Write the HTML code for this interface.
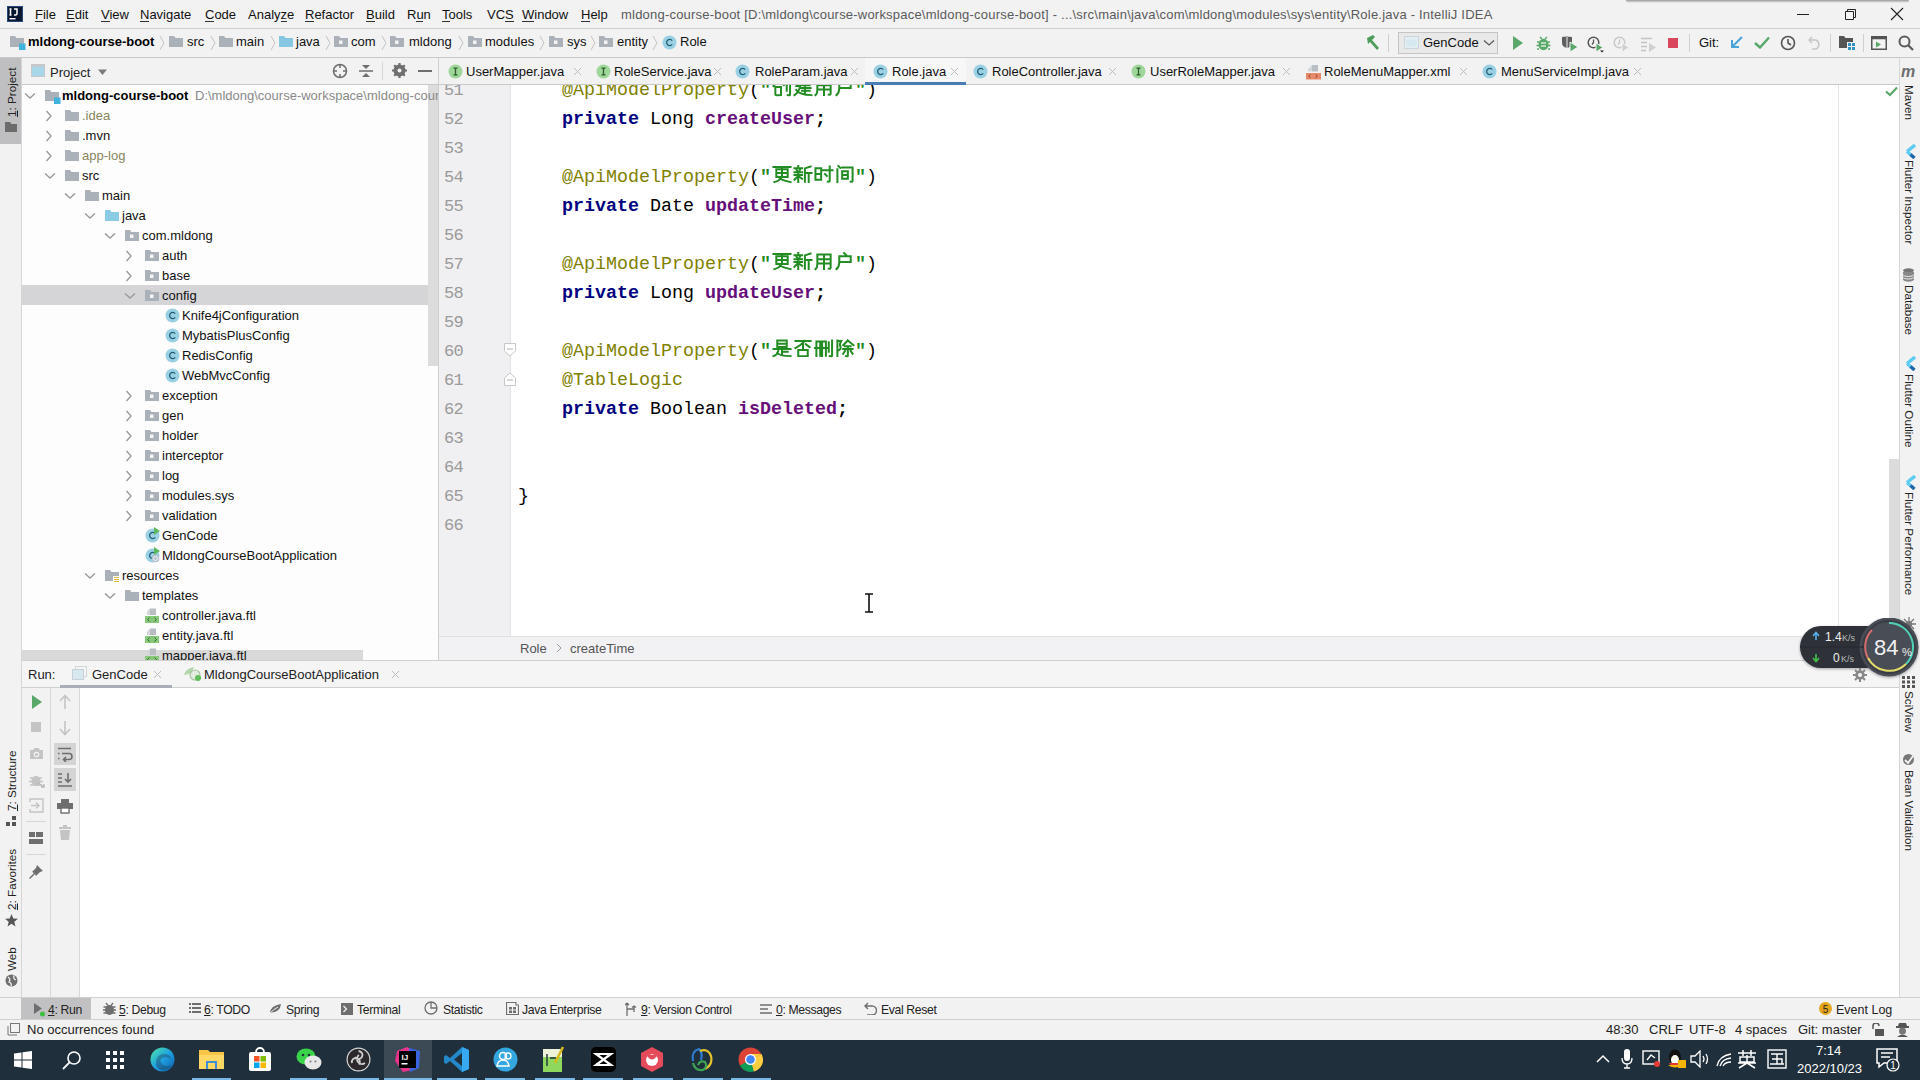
<!DOCTYPE html><html><head><meta charset="utf-8"><style>
html,body{margin:0;padding:0;width:1920px;height:1080px;overflow:hidden;background:#f2f2f2;font-family:"Liberation Sans", sans-serif;}
body>div,body>svg{position:absolute;}
.t{position:absolute;white-space:nowrap;}
div>div,div>svg{position:absolute;}
</style></head><body>

<div style="left:0px;top:0px;width:1920px;height:28px;background:#f2f2f2;"></div>
<div style="left:0px;top:28px;width:1920px;height:1px;background:#cfcfcf;"></div>
<div style="left:0px;top:29px;width:1920px;height:28px;background:#f2f2f2;"></div>
<div style="left:0px;top:57px;width:1920px;height:1px;background:#c9c9c9;"></div>
<div style="left:0px;top:58px;width:21px;height:940px;background:#f2f2f2;"></div>
<div style="left:21px;top:58px;width:1px;height:940px;background:#d6d6d6;"></div>
<div style="left:0px;top:58px;width:21px;height:86px;background:#bfbfc1;"></div>
<div style="left:22px;top:58px;width:416px;height:27px;background:#f2f2f2;"></div>
<div style="left:22px;top:84px;width:416px;height:1px;background:#c9c9c9;"></div>
<div style="left:22px;top:85px;width:416px;height:575px;background:#fdfdfd;"></div>
<div style="left:438px;top:58px;width:1px;height:602px;background:#cfcfcf;"></div>
<div style="left:439px;top:58px;width:1460px;height:26px;background:#f2f2f2;"></div>
<div style="left:439px;top:84px;width:1460px;height:1px;background:#c9c9c9;"></div>
<div style="left:439px;top:85px;width:71px;height:551px;background:#f0eff1;"></div>
<div style="left:510px;top:85px;width:1px;height:551px;background:#e3e3e3;"></div>
<div style="left:511px;top:85px;width:1388px;height:551px;background:#ffffff;"></div>
<div style="left:1838px;top:85px;width:1px;height:551px;background:#e4e4e4;"></div>
<div style="left:439px;top:636px;width:1460px;height:1px;background:#e0e0e0;"></div>
<div style="left:439px;top:637px;width:1460px;height:23px;background:#f2f1f3;"></div>
<div style="left:22px;top:660px;width:1877px;height:1px;background:#cfcfcf;"></div>
<div style="left:1899px;top:58px;width:21px;height:940px;background:#f2f2f2;"></div>
<div style="left:1899px;top:58px;width:1px;height:940px;background:#d6d6d6;"></div>
<div style="left:22px;top:661px;width:1877px;height:26px;background:#f5f5f6;"></div>
<div style="left:22px;top:687px;width:1877px;height:1px;background:#d0d0d0;"></div>
<div style="left:22px;top:688px;width:28px;height:309px;background:#f2f2f2;"></div>
<div style="left:50px;top:688px;width:1px;height:309px;background:#d8d8d8;"></div>
<div style="left:51px;top:688px;width:28px;height:309px;background:#f2f2f2;"></div>
<div style="left:79px;top:688px;width:1px;height:309px;background:#d8d8d8;"></div>
<div style="left:80px;top:688px;width:1819px;height:309px;background:#ffffff;"></div>
<div style="left:0px;top:997px;width:1920px;height:1px;background:#d0d0d0;"></div>
<div style="left:0px;top:998px;width:1920px;height:21px;background:#f2f2f2;"></div>
<div style="left:21px;top:998px;width:70px;height:21px;background:#c1c1c3;"></div>
<div style="left:0px;top:1019px;width:1920px;height:1px;background:#cfcfcf;"></div>
<div style="left:0px;top:1020px;width:1920px;height:20px;background:#f2f2f2;"></div>
<div style="left:0px;top:1040px;width:1920px;height:40px;background:#1f2f3b;"></div>
<svg style="left:7px;top:6px;" width="16" height="16" viewBox="0 0 16 16"><rect width="16" height="16" fill="#0a1730"/><rect x="0.5" y="0.5" width="15" height="15" fill="none" stroke="#24497a" stroke-width="1"/><path d="M3.5 3 V9 M2.5 3 H4.5 M2.5 9 H4.5 M7 3 H10 V7.5 Q10 9 8.3 9 H7" fill="none" stroke="#fff" stroke-width="1.5"/><rect x="2.5" y="12" width="6" height="1.4" fill="#fff"/></svg>
<div class="t" style="left:35px;top:7px;font-size:13px;line-height:normal;color:#111;font-weight:normal;font-family:'Liberation Sans', sans-serif;">File</div>
<div style="left:35px;top:21px;width:8px;height:1px;background:#333;"></div>
<div class="t" style="left:66px;top:7px;font-size:13px;line-height:normal;color:#111;font-weight:normal;font-family:'Liberation Sans', sans-serif;">Edit</div>
<div style="left:66px;top:21px;width:9px;height:1px;background:#333;"></div>
<div class="t" style="left:101px;top:7px;font-size:13px;line-height:normal;color:#111;font-weight:normal;font-family:'Liberation Sans', sans-serif;">View</div>
<div style="left:101px;top:21px;width:9px;height:1px;background:#333;"></div>
<div class="t" style="left:140px;top:7px;font-size:13px;line-height:normal;color:#111;font-weight:normal;font-family:'Liberation Sans', sans-serif;">Navigate</div>
<div style="left:140px;top:21px;width:9px;height:1px;background:#333;"></div>
<div class="t" style="left:205px;top:7px;font-size:13px;line-height:normal;color:#111;font-weight:normal;font-family:'Liberation Sans', sans-serif;">Code</div>
<div style="left:205px;top:21px;width:9px;height:1px;background:#333;"></div>
<div class="t" style="left:248px;top:7px;font-size:13px;line-height:normal;color:#111;font-weight:normal;font-family:'Liberation Sans', sans-serif;">Analyze</div>
<div style="left:281px;top:21px;width:6px;height:1px;background:#333;"></div>
<div class="t" style="left:305px;top:7px;font-size:13px;line-height:normal;color:#111;font-weight:normal;font-family:'Liberation Sans', sans-serif;">Refactor</div>
<div style="left:305px;top:21px;width:9px;height:1px;background:#333;"></div>
<div class="t" style="left:366px;top:7px;font-size:13px;line-height:normal;color:#111;font-weight:normal;font-family:'Liberation Sans', sans-serif;">Build</div>
<div style="left:366px;top:21px;width:9px;height:1px;background:#333;"></div>
<div class="t" style="left:407px;top:7px;font-size:13px;line-height:normal;color:#111;font-weight:normal;font-family:'Liberation Sans', sans-serif;">Run</div>
<div style="left:416px;top:21px;width:7px;height:1px;background:#333;"></div>
<div class="t" style="left:442px;top:7px;font-size:13px;line-height:normal;color:#111;font-weight:normal;font-family:'Liberation Sans', sans-serif;">Tools</div>
<div style="left:442px;top:21px;width:8px;height:1px;background:#333;"></div>
<div class="t" style="left:487px;top:7px;font-size:13px;line-height:normal;color:#111;font-weight:normal;font-family:'Liberation Sans', sans-serif;">VCS</div>
<div style="left:505px;top:21px;width:9px;height:1px;background:#333;"></div>
<div class="t" style="left:522px;top:7px;font-size:13px;line-height:normal;color:#111;font-weight:normal;font-family:'Liberation Sans', sans-serif;">Window</div>
<div style="left:522px;top:21px;width:12px;height:1px;background:#333;"></div>
<div class="t" style="left:581px;top:7px;font-size:13px;line-height:normal;color:#111;font-weight:normal;font-family:'Liberation Sans', sans-serif;">Help</div>
<div style="left:581px;top:21px;width:9px;height:1px;background:#333;"></div>
<div class="t" style="left:621px;top:7px;font-size:13px;line-height:normal;color:#5a5a5a;font-weight:normal;font-family:'Liberation Sans', sans-serif;letter-spacing:0.21px;">mldong-course-boot [D:\mldong\course-workspace\mldong-course-boot] - ...\src\main\java\com\mldong\modules\sys\entity\Role.java - IntelliJ IDEA</div>
<svg style="left:1795px;top:8px;" width="16" height="12" viewBox="0 0 16 12"><path d="M2 6.5 H14" stroke="#222" stroke-width="1"/></svg>
<svg style="left:1842px;top:7px;" width="16" height="14" viewBox="0 0 16 14"><path d="M3.5 4.5 H11.5 V12.5 H3.5 Z M5.5 4.5 V2.5 H13.5 V10.5 H11.5" fill="none" stroke="#222" stroke-width="1"/></svg>
<svg style="left:1889px;top:7px;" width="16" height="16" viewBox="0 0 16 16"><path d="M2 1 L14 13 M14 1 L2 13" stroke="#222" stroke-width="1.1"/></svg>
<svg style="left:10px;top:36px;" width="16" height="15" viewBox="0 0 16 15"><path d="M0 0 H5 L6.5 2 H14 V11 H0 Z" fill="#abb1b8"/><rect x="9" y="7.5" width="6.5" height="6.5" fill="#3fb3dc"/></svg>
<div class="t" style="left:28px;top:34px;font-size:13px;line-height:normal;color:#000;font-weight:bold;font-family:'Liberation Sans', sans-serif;">mldong-course-boot</div>
<svg style="left:159px;top:35px;" width="6" height="16" viewBox="0 0 6 16"><path d="M1 1 L5 8 L1 15" fill="none" stroke="#c3c3c3" stroke-width="1"/></svg>
<svg style="left:169px;top:36px;" width="16" height="13" viewBox="0 0 16 13"><path d="M0 0 H5 L6.5 2 H14 V11 H0 Z" fill="#abb1b8"/></svg>
<div class="t" style="left:187px;top:34px;font-size:13px;line-height:normal;color:#111;font-weight:normal;font-family:'Liberation Sans', sans-serif;">src</div>
<svg style="left:219px;top:36px;" width="16" height="13" viewBox="0 0 16 13"><path d="M0 0 H5 L6.5 2 H14 V11 H0 Z" fill="#abb1b8"/></svg>
<div class="t" style="left:236px;top:34px;font-size:13px;line-height:normal;color:#111;font-weight:normal;font-family:'Liberation Sans', sans-serif;">main</div>
<svg style="left:279px;top:36px;" width="16" height="13" viewBox="0 0 16 13"><path d="M0 0 H5 L6.5 2 H14 V11 H0 Z" fill="#86c7e3"/></svg>
<div class="t" style="left:296px;top:34px;font-size:13px;line-height:normal;color:#111;font-weight:normal;font-family:'Liberation Sans', sans-serif;">java</div>
<svg style="left:334px;top:36px;" width="16" height="13" viewBox="0 0 16 13"><path d="M0 0 H5 L6.5 2 H14 V11 H0 Z" fill="#abb1b8"/><rect x="5" y="4.5" width="3.5" height="3.5" fill="#f4f4f4"/></svg>
<div class="t" style="left:351px;top:34px;font-size:13px;line-height:normal;color:#111;font-weight:normal;font-family:'Liberation Sans', sans-serif;">com</div>
<svg style="left:390px;top:36px;" width="16" height="13" viewBox="0 0 16 13"><path d="M0 0 H5 L6.5 2 H14 V11 H0 Z" fill="#abb1b8"/><rect x="5" y="4.5" width="3.5" height="3.5" fill="#f4f4f4"/></svg>
<div class="t" style="left:409px;top:34px;font-size:13px;line-height:normal;color:#111;font-weight:normal;font-family:'Liberation Sans', sans-serif;">mldong</div>
<svg style="left:468px;top:36px;" width="16" height="13" viewBox="0 0 16 13"><path d="M0 0 H5 L6.5 2 H14 V11 H0 Z" fill="#abb1b8"/><rect x="5" y="4.5" width="3.5" height="3.5" fill="#f4f4f4"/></svg>
<div class="t" style="left:485px;top:34px;font-size:13px;line-height:normal;color:#111;font-weight:normal;font-family:'Liberation Sans', sans-serif;">modules</div>
<svg style="left:549px;top:36px;" width="16" height="13" viewBox="0 0 16 13"><path d="M0 0 H5 L6.5 2 H14 V11 H0 Z" fill="#abb1b8"/><rect x="5" y="4.5" width="3.5" height="3.5" fill="#f4f4f4"/></svg>
<div class="t" style="left:567px;top:34px;font-size:13px;line-height:normal;color:#111;font-weight:normal;font-family:'Liberation Sans', sans-serif;">sys</div>
<svg style="left:599px;top:36px;" width="16" height="13" viewBox="0 0 16 13"><path d="M0 0 H5 L6.5 2 H14 V11 H0 Z" fill="#abb1b8"/><rect x="5" y="4.5" width="3.5" height="3.5" fill="#f4f4f4"/></svg>
<div class="t" style="left:617px;top:34px;font-size:13px;line-height:normal;color:#111;font-weight:normal;font-family:'Liberation Sans', sans-serif;">entity</div>
<svg style="left:210px;top:35px;" width="6" height="16" viewBox="0 0 6 16"><path d="M1 1 L5 8 L1 15" fill="none" stroke="#c3c3c3" stroke-width="1"/></svg>
<svg style="left:270px;top:35px;" width="6" height="16" viewBox="0 0 6 16"><path d="M1 1 L5 8 L1 15" fill="none" stroke="#c3c3c3" stroke-width="1"/></svg>
<svg style="left:325px;top:35px;" width="6" height="16" viewBox="0 0 6 16"><path d="M1 1 L5 8 L1 15" fill="none" stroke="#c3c3c3" stroke-width="1"/></svg>
<svg style="left:381px;top:35px;" width="6" height="16" viewBox="0 0 6 16"><path d="M1 1 L5 8 L1 15" fill="none" stroke="#c3c3c3" stroke-width="1"/></svg>
<svg style="left:458px;top:35px;" width="6" height="16" viewBox="0 0 6 16"><path d="M1 1 L5 8 L1 15" fill="none" stroke="#c3c3c3" stroke-width="1"/></svg>
<svg style="left:539px;top:35px;" width="6" height="16" viewBox="0 0 6 16"><path d="M1 1 L5 8 L1 15" fill="none" stroke="#c3c3c3" stroke-width="1"/></svg>
<svg style="left:590px;top:35px;" width="6" height="16" viewBox="0 0 6 16"><path d="M1 1 L5 8 L1 15" fill="none" stroke="#c3c3c3" stroke-width="1"/></svg>
<svg style="left:652px;top:35px;" width="6" height="16" viewBox="0 0 6 16"><path d="M1 1 L5 8 L1 15" fill="none" stroke="#c3c3c3" stroke-width="1"/></svg>
<svg style="left:662px;top:35px;" width="15" height="15" viewBox="0 0 15 15"><circle cx="7.5" cy="7.5" r="7" fill="#9ad0e4"/><path d="M10.2 5.6 A3.1 3.1 0 1 0 10.2 9.4" fill="none" stroke="#245f78" stroke-width="1.3"/></svg>
<div class="t" style="left:680px;top:34px;font-size:13px;line-height:normal;color:#111;font-weight:normal;font-family:'Liberation Sans', sans-serif;">Role</div>
<svg style="left:1364px;top:34px;" width="18" height="18" viewBox="0 0 18 18"><path d="M3 4 L9 1 L11 3 L8 6 L15 14 L13 16 L6 8 L4 10 Z" fill="#4d9e5c"/></svg>
<div style="left:1388px;top:34px;width:1px;height:18px;background:#cfcfcf;"></div>
<div style="left:1398px;top:32px;width:100px;height:22px;background:#e9e9e9;border:1px solid #c4c4c4;box-sizing:border-box;"></div>
<svg style="left:1404px;top:36px;" width="16" height="14" viewBox="0 0 16 14"><rect x="0.5" y="0.5" width="14" height="12" fill="#e3eef3" stroke="#c9d6dc"/><rect x="2.5" y="3.5" width="10" height="7" fill="#d5e7ef"/></svg>
<div class="t" style="left:1423px;top:35px;font-size:13px;line-height:normal;color:#111;font-weight:normal;font-family:'Liberation Sans', sans-serif;">GenCode</div>
<svg style="left:1483px;top:39px;" width="12" height="8" viewBox="0 0 12 8"><path d="M1 1.5 L6 6 L11 1.5" fill="none" stroke="#555" stroke-width="1.2"/></svg>
<svg style="left:1512px;top:36px;" width="12" height="14" viewBox="0 0 12 14"><path d="M1 0 L11 7 L1 14 Z" fill="#59a869"/></svg>
<svg style="left:1536px;top:35px;" width="15" height="16" viewBox="0 0 15 16"><path d="M4 2 L6 4 M11 2 L9 4" stroke="#59a869" stroke-width="1.5"/><ellipse cx="7.5" cy="9.5" rx="5" ry="5.8" fill="#59a869"/><path d="M1 7 H3 M12 7 H14 M0.5 10.5 H3 M12 10.5 H14.5 M1 14 H3 M12 14 H14" stroke="#59a869" stroke-width="1.5"/><path d="M5 8 H10 M5 11 H10" stroke="#d8ecd9" stroke-width="1.3"/></svg>
<svg style="left:1561px;top:36px;" width="18" height="17" viewBox="0 0 18 17"><path d="M1 1 Q5 0 11 1 V7 Q11 11 6 12 Q1 11 1 7 Z" fill="#5f5f5f"/><path d="M6 1 V12" stroke="#f2f2f2" stroke-width="1"/><path d="M9 6 L17 11 L9 16 Z" fill="#59a869" stroke="#f2f2f2" stroke-width="1"/></svg>
<svg style="left:1587px;top:36px;" width="19" height="17" viewBox="0 0 19 17"><circle cx="6.5" cy="6.5" r="5.3" fill="none" stroke="#555" stroke-width="1.5"/><path d="M6.5 3.5 V6.5 L5 8.5" stroke="#555" stroke-width="1.3" fill="none"/><path d="M9 7 L16 11.5 L9 16 Z" fill="#59a869" stroke="#f2f2f2" stroke-width="1"/><path d="M13 14.5 H17 L15 16.5 Z" fill="#222"/></svg>
<svg style="left:1613px;top:36px;" width="19" height="17" viewBox="0 0 19 17"><circle cx="6.5" cy="6.5" r="5.3" fill="none" stroke="#c8c8c8" stroke-width="1.5"/><path d="M6.5 3.5 V6.5 L5 8.5" stroke="#c8c8c8" stroke-width="1.3" fill="none"/><path d="M9 7 L16 11.5 L9 16 Z" fill="#cfcfcf" stroke="#f2f2f2" stroke-width="1"/></svg>
<svg style="left:1640px;top:37px;" width="17" height="15" viewBox="0 0 17 15"><path d="M1 1.5 H12 M1 5.5 H7 M1 9.5 H7 M1 13.5 H6" stroke="#c4c4c4" stroke-width="1.5"/><path d="M9 6 L16 10.5 L9 15 Z" fill="#cfcfcf"/></svg>
<div style="left:1668px;top:38px;width:10px;height:10px;background:#d9455b;"></div>
<div style="left:1689px;top:34px;width:1px;height:18px;background:#cfcfcf;"></div>
<div class="t" style="left:1699px;top:35px;font-size:13px;line-height:normal;color:#111;font-weight:normal;font-family:'Liberation Sans', sans-serif;">Git:</div>
<svg style="left:1729px;top:35px;" width="15" height="15" viewBox="0 0 15 15"><path d="M13 2 L3 12 M3 5 V12 H10" fill="none" stroke="#4aa3d6" stroke-width="2"/></svg>
<svg style="left:1754px;top:36px;" width="16" height="13" viewBox="0 0 16 13"><path d="M1 7 L6 11.5 L15 1.5" fill="none" stroke="#59a869" stroke-width="2.4"/></svg>
<svg style="left:1780px;top:35px;" width="16" height="16" viewBox="0 0 16 16"><circle cx="8" cy="8" r="6.5" fill="none" stroke="#555" stroke-width="1.6"/><path d="M8 4 V8 L11 10" stroke="#555" stroke-width="1.6" fill="none"/></svg>
<svg style="left:1808px;top:36px;" width="14" height="14" viewBox="0 0 14 14"><path d="M4 1 L1 4 L4 7 M1 4 H8 A5 5 0 0 1 8 13 H4" fill="none" stroke="#c6c6c6" stroke-width="1.5"/></svg>
<div style="left:1830px;top:34px;width:1px;height:18px;background:#cfcfcf;"></div>
<svg style="left:1839px;top:36px;" width="17" height="14" viewBox="0 0 17 14"><path d="M0 0 H5 L6.5 2 H14 V12 H0 Z" fill="#555"/><rect x="8" y="6" width="8" height="8" fill="#f2f2f2"/><rect x="9" y="7" width="3" height="3" fill="#3592c4"/><rect x="13" y="7" width="3" height="3" fill="#3592c4"/><rect x="9" y="11" width="3" height="3" fill="#3592c4"/><rect x="13" y="11" width="3" height="3" fill="#3592c4"/></svg>
<div style="left:1863px;top:34px;width:1px;height:18px;background:#cfcfcf;"></div>
<svg style="left:1871px;top:36px;" width="16" height="14" viewBox="0 0 16 14"><rect x="0.75" y="0.75" width="14.5" height="12.5" fill="none" stroke="#555" stroke-width="1.5"/><rect x="0.75" y="0.75" width="14.5" height="2.5" fill="#555"/><path d="M5 5.5 L10 8.5 L5 11.5 Z" fill="#59a869"/></svg>
<svg style="left:1898px;top:35px;" width="16" height="16" viewBox="0 0 16 16"><circle cx="6.5" cy="6.5" r="5" fill="none" stroke="#5a5a5a" stroke-width="2"/><path d="M10 10 L15 15" stroke="#5a5a5a" stroke-width="2.2"/></svg>
<svg style="left:31px;top:64px;" width="15" height="14" viewBox="0 0 15 14"><rect x="0.5" y="0.5" width="13" height="12" fill="#a9d7ea" stroke="#c4c8cc"/><rect x="0.5" y="0.5" width="13" height="2.5" fill="#c4c8cc"/></svg>
<div class="t" style="left:50px;top:65px;font-size:13px;line-height:normal;color:#222;font-weight:normal;font-family:'Liberation Sans', sans-serif;">Project</div>
<svg style="left:98px;top:69px;" width="10" height="7" viewBox="0 0 10 7"><path d="M0 0.5 H9 L4.5 6 Z" fill="#7a7a7a"/></svg>
<svg style="left:332px;top:63px;" width="16" height="16" viewBox="0 0 16 16"><circle cx="8" cy="8" r="6.5" fill="none" stroke="#6e6e6e" stroke-width="1.5"/><path d="M8 1 V5 M8 11 V15 M1 8 H5 M11 8 H15" stroke="#6e6e6e" stroke-width="1.5"/></svg>
<svg style="left:359px;top:64px;" width="14" height="14" viewBox="0 0 14 14"><path d="M0 7 H14" stroke="#6e6e6e" stroke-width="1.5"/><path d="M3 1 H11 L7 5 Z M3 13 H11 L7 9 Z" fill="#6e6e6e"/></svg>
<div style="left:382px;top:62px;width:1px;height:18px;background:#d6d6d6;"></div>
<svg style="left:392px;top:63px;" width="15" height="15" viewBox="0 0 15 15"><circle cx="7.5" cy="7.5" r="4.5" fill="none" stroke="#6e6e6e" stroke-width="3"/><path d="M7.5 0 V15 M0 7.5 H15 M2.2 2.2 L12.8 12.8 M12.8 2.2 L2.2 12.8" stroke="#6e6e6e" stroke-width="2.2"/><circle cx="7.5" cy="7.5" r="2" fill="#f2f2f2"/></svg>
<div style="left:418px;top:70px;width:14px;height:2px;background:#6e6e6e;"></div>
<div style="left:0;top:0;width:1920px;height:1080px;clip-path:inset(85px 1482px 420px 22px);">
<div style="left:22px;top:285px;width:406px;height:20px;background:#d5d5d7;"></div>
<div style="left:428px;top:85px;width:10px;height:281px;background:#dcdcdc;"></div>
<div style="left:22px;top:650px;width:341px;height:10px;background:#d9d9d9;"></div>
<svg style="left:24px;top:92px;" width="12" height="8" viewBox="0 0 12 8"><path d="M1 1.5 L6 6 L11 1.5" fill="none" stroke="#9a9a9a" stroke-width="1.4"/></svg>
<svg style="left:45px;top:90px;" width="16" height="15" viewBox="0 0 16 15"><path d="M0 0 H5 L6.5 2 H14 V11 H0 Z" fill="#abb1b8"/><rect x="9" y="7.5" width="6.5" height="6.5" fill="#3fb3dc"/></svg>
<div class="t" style="left:62px;top:88px;font-size:13px;line-height:normal;color:#000;font-weight:bold;font-family:'Liberation Sans', sans-serif;">mldong-course-boot</div>
<div class="t" style="left:195px;top:88px;font-size:13px;line-height:normal;color:#8a8a8a;font-weight:normal;font-family:'Liberation Sans', sans-serif;">D:\mldong\course-workspace\mldong-course-boot</div>
<svg style="left:45px;top:110px;" width="8" height="12" viewBox="0 0 8 12"><path d="M1.5 1 L6 6 L1.5 11" fill="none" stroke="#9a9a9a" stroke-width="1.4"/></svg>
<svg style="left:65px;top:110px;" width="16" height="13" viewBox="0 0 16 13"><path d="M0 0 H5 L6.5 2 H14 V11 H0 Z" fill="#abb1b8"/></svg>
<div class="t" style="left:82px;top:108px;font-size:13px;line-height:normal;color:#87865a;font-weight:normal;font-family:'Liberation Sans', sans-serif;">.idea</div>
<svg style="left:45px;top:130px;" width="8" height="12" viewBox="0 0 8 12"><path d="M1.5 1 L6 6 L1.5 11" fill="none" stroke="#9a9a9a" stroke-width="1.4"/></svg>
<svg style="left:65px;top:130px;" width="16" height="13" viewBox="0 0 16 13"><path d="M0 0 H5 L6.5 2 H14 V11 H0 Z" fill="#abb1b8"/></svg>
<div class="t" style="left:82px;top:128px;font-size:13px;line-height:normal;color:#111;font-weight:normal;font-family:'Liberation Sans', sans-serif;">.mvn</div>
<svg style="left:45px;top:150px;" width="8" height="12" viewBox="0 0 8 12"><path d="M1.5 1 L6 6 L1.5 11" fill="none" stroke="#9a9a9a" stroke-width="1.4"/></svg>
<svg style="left:65px;top:150px;" width="16" height="13" viewBox="0 0 16 13"><path d="M0 0 H5 L6.5 2 H14 V11 H0 Z" fill="#abb1b8"/></svg>
<div class="t" style="left:82px;top:148px;font-size:13px;line-height:normal;color:#87865a;font-weight:normal;font-family:'Liberation Sans', sans-serif;">app-log</div>
<svg style="left:44px;top:172px;" width="12" height="8" viewBox="0 0 12 8"><path d="M1 1.5 L6 6 L11 1.5" fill="none" stroke="#9a9a9a" stroke-width="1.4"/></svg>
<svg style="left:65px;top:170px;" width="16" height="13" viewBox="0 0 16 13"><path d="M0 0 H5 L6.5 2 H14 V11 H0 Z" fill="#abb1b8"/></svg>
<div class="t" style="left:82px;top:168px;font-size:13px;line-height:normal;color:#111;font-weight:normal;font-family:'Liberation Sans', sans-serif;">src</div>
<svg style="left:64px;top:192px;" width="12" height="8" viewBox="0 0 12 8"><path d="M1 1.5 L6 6 L11 1.5" fill="none" stroke="#9a9a9a" stroke-width="1.4"/></svg>
<svg style="left:85px;top:190px;" width="16" height="13" viewBox="0 0 16 13"><path d="M0 0 H5 L6.5 2 H14 V11 H0 Z" fill="#abb1b8"/></svg>
<div class="t" style="left:102px;top:188px;font-size:13px;line-height:normal;color:#111;font-weight:normal;font-family:'Liberation Sans', sans-serif;">main</div>
<svg style="left:84px;top:212px;" width="12" height="8" viewBox="0 0 12 8"><path d="M1 1.5 L6 6 L11 1.5" fill="none" stroke="#9a9a9a" stroke-width="1.4"/></svg>
<svg style="left:105px;top:210px;" width="16" height="13" viewBox="0 0 16 13"><path d="M0 0 H5 L6.5 2 H14 V11 H0 Z" fill="#8ccbe6"/></svg>
<div class="t" style="left:122px;top:208px;font-size:13px;line-height:normal;color:#111;font-weight:normal;font-family:'Liberation Sans', sans-serif;">java</div>
<svg style="left:104px;top:232px;" width="12" height="8" viewBox="0 0 12 8"><path d="M1 1.5 L6 6 L11 1.5" fill="none" stroke="#9a9a9a" stroke-width="1.4"/></svg>
<svg style="left:125px;top:230px;" width="16" height="13" viewBox="0 0 16 13"><path d="M0 0 H5 L6.5 2 H14 V11 H0 Z" fill="#abb1b8"/><rect x="5" y="4.5" width="3.5" height="3.5" fill="#f4f4f4"/></svg>
<div class="t" style="left:142px;top:228px;font-size:13px;line-height:normal;color:#111;font-weight:normal;font-family:'Liberation Sans', sans-serif;">com.mldong</div>
<svg style="left:125px;top:250px;" width="8" height="12" viewBox="0 0 8 12"><path d="M1.5 1 L6 6 L1.5 11" fill="none" stroke="#9a9a9a" stroke-width="1.4"/></svg>
<svg style="left:145px;top:250px;" width="16" height="13" viewBox="0 0 16 13"><path d="M0 0 H5 L6.5 2 H14 V11 H0 Z" fill="#abb1b8"/><rect x="5" y="4.5" width="3.5" height="3.5" fill="#f4f4f4"/></svg>
<div class="t" style="left:162px;top:248px;font-size:13px;line-height:normal;color:#111;font-weight:normal;font-family:'Liberation Sans', sans-serif;">auth</div>
<svg style="left:125px;top:270px;" width="8" height="12" viewBox="0 0 8 12"><path d="M1.5 1 L6 6 L1.5 11" fill="none" stroke="#9a9a9a" stroke-width="1.4"/></svg>
<svg style="left:145px;top:270px;" width="16" height="13" viewBox="0 0 16 13"><path d="M0 0 H5 L6.5 2 H14 V11 H0 Z" fill="#abb1b8"/><rect x="5" y="4.5" width="3.5" height="3.5" fill="#f4f4f4"/></svg>
<div class="t" style="left:162px;top:268px;font-size:13px;line-height:normal;color:#111;font-weight:normal;font-family:'Liberation Sans', sans-serif;">base</div>
<svg style="left:124px;top:292px;" width="12" height="8" viewBox="0 0 12 8"><path d="M1 1.5 L6 6 L11 1.5" fill="none" stroke="#9a9a9a" stroke-width="1.4"/></svg>
<svg style="left:145px;top:290px;" width="16" height="13" viewBox="0 0 16 13"><path d="M0 0 H5 L6.5 2 H14 V11 H0 Z" fill="#abb1b8"/><rect x="5" y="4.5" width="3.5" height="3.5" fill="#f4f4f4"/></svg>
<div class="t" style="left:162px;top:288px;font-size:13px;line-height:normal;color:#111;font-weight:normal;font-family:'Liberation Sans', sans-serif;">config</div>
<svg style="left:165px;top:308px;" width="15" height="15" viewBox="0 0 15 15"><circle cx="7.5" cy="7.5" r="7" fill="#9ad0e4"/><path d="M10.2 5.6 A3.1 3.1 0 1 0 10.2 9.4" fill="none" stroke="#245f78" stroke-width="1.3"/></svg>
<div class="t" style="left:182px;top:308px;font-size:13px;line-height:normal;color:#111;font-weight:normal;font-family:'Liberation Sans', sans-serif;">Knife4jConfiguration</div>
<svg style="left:165px;top:328px;" width="15" height="15" viewBox="0 0 15 15"><circle cx="7.5" cy="7.5" r="7" fill="#9ad0e4"/><path d="M10.2 5.6 A3.1 3.1 0 1 0 10.2 9.4" fill="none" stroke="#245f78" stroke-width="1.3"/></svg>
<div class="t" style="left:182px;top:328px;font-size:13px;line-height:normal;color:#111;font-weight:normal;font-family:'Liberation Sans', sans-serif;">MybatisPlusConfig</div>
<svg style="left:165px;top:348px;" width="15" height="15" viewBox="0 0 15 15"><circle cx="7.5" cy="7.5" r="7" fill="#9ad0e4"/><path d="M10.2 5.6 A3.1 3.1 0 1 0 10.2 9.4" fill="none" stroke="#245f78" stroke-width="1.3"/></svg>
<div class="t" style="left:182px;top:348px;font-size:13px;line-height:normal;color:#111;font-weight:normal;font-family:'Liberation Sans', sans-serif;">RedisConfig</div>
<svg style="left:165px;top:368px;" width="15" height="15" viewBox="0 0 15 15"><circle cx="7.5" cy="7.5" r="7" fill="#9ad0e4"/><path d="M10.2 5.6 A3.1 3.1 0 1 0 10.2 9.4" fill="none" stroke="#245f78" stroke-width="1.3"/></svg>
<div class="t" style="left:182px;top:368px;font-size:13px;line-height:normal;color:#111;font-weight:normal;font-family:'Liberation Sans', sans-serif;">WebMvcConfig</div>
<svg style="left:125px;top:390px;" width="8" height="12" viewBox="0 0 8 12"><path d="M1.5 1 L6 6 L1.5 11" fill="none" stroke="#9a9a9a" stroke-width="1.4"/></svg>
<svg style="left:145px;top:390px;" width="16" height="13" viewBox="0 0 16 13"><path d="M0 0 H5 L6.5 2 H14 V11 H0 Z" fill="#abb1b8"/><rect x="5" y="4.5" width="3.5" height="3.5" fill="#f4f4f4"/></svg>
<div class="t" style="left:162px;top:388px;font-size:13px;line-height:normal;color:#111;font-weight:normal;font-family:'Liberation Sans', sans-serif;">exception</div>
<svg style="left:125px;top:410px;" width="8" height="12" viewBox="0 0 8 12"><path d="M1.5 1 L6 6 L1.5 11" fill="none" stroke="#9a9a9a" stroke-width="1.4"/></svg>
<svg style="left:145px;top:410px;" width="16" height="13" viewBox="0 0 16 13"><path d="M0 0 H5 L6.5 2 H14 V11 H0 Z" fill="#abb1b8"/><rect x="5" y="4.5" width="3.5" height="3.5" fill="#f4f4f4"/></svg>
<div class="t" style="left:162px;top:408px;font-size:13px;line-height:normal;color:#111;font-weight:normal;font-family:'Liberation Sans', sans-serif;">gen</div>
<svg style="left:125px;top:430px;" width="8" height="12" viewBox="0 0 8 12"><path d="M1.5 1 L6 6 L1.5 11" fill="none" stroke="#9a9a9a" stroke-width="1.4"/></svg>
<svg style="left:145px;top:430px;" width="16" height="13" viewBox="0 0 16 13"><path d="M0 0 H5 L6.5 2 H14 V11 H0 Z" fill="#abb1b8"/><rect x="5" y="4.5" width="3.5" height="3.5" fill="#f4f4f4"/></svg>
<div class="t" style="left:162px;top:428px;font-size:13px;line-height:normal;color:#111;font-weight:normal;font-family:'Liberation Sans', sans-serif;">holder</div>
<svg style="left:125px;top:450px;" width="8" height="12" viewBox="0 0 8 12"><path d="M1.5 1 L6 6 L1.5 11" fill="none" stroke="#9a9a9a" stroke-width="1.4"/></svg>
<svg style="left:145px;top:450px;" width="16" height="13" viewBox="0 0 16 13"><path d="M0 0 H5 L6.5 2 H14 V11 H0 Z" fill="#abb1b8"/><rect x="5" y="4.5" width="3.5" height="3.5" fill="#f4f4f4"/></svg>
<div class="t" style="left:162px;top:448px;font-size:13px;line-height:normal;color:#111;font-weight:normal;font-family:'Liberation Sans', sans-serif;">interceptor</div>
<svg style="left:125px;top:470px;" width="8" height="12" viewBox="0 0 8 12"><path d="M1.5 1 L6 6 L1.5 11" fill="none" stroke="#9a9a9a" stroke-width="1.4"/></svg>
<svg style="left:145px;top:470px;" width="16" height="13" viewBox="0 0 16 13"><path d="M0 0 H5 L6.5 2 H14 V11 H0 Z" fill="#abb1b8"/><rect x="5" y="4.5" width="3.5" height="3.5" fill="#f4f4f4"/></svg>
<div class="t" style="left:162px;top:468px;font-size:13px;line-height:normal;color:#111;font-weight:normal;font-family:'Liberation Sans', sans-serif;">log</div>
<svg style="left:125px;top:490px;" width="8" height="12" viewBox="0 0 8 12"><path d="M1.5 1 L6 6 L1.5 11" fill="none" stroke="#9a9a9a" stroke-width="1.4"/></svg>
<svg style="left:145px;top:490px;" width="16" height="13" viewBox="0 0 16 13"><path d="M0 0 H5 L6.5 2 H14 V11 H0 Z" fill="#abb1b8"/><rect x="5" y="4.5" width="3.5" height="3.5" fill="#f4f4f4"/></svg>
<div class="t" style="left:162px;top:488px;font-size:13px;line-height:normal;color:#111;font-weight:normal;font-family:'Liberation Sans', sans-serif;">modules.sys</div>
<svg style="left:125px;top:510px;" width="8" height="12" viewBox="0 0 8 12"><path d="M1.5 1 L6 6 L1.5 11" fill="none" stroke="#9a9a9a" stroke-width="1.4"/></svg>
<svg style="left:145px;top:510px;" width="16" height="13" viewBox="0 0 16 13"><path d="M0 0 H5 L6.5 2 H14 V11 H0 Z" fill="#abb1b8"/><rect x="5" y="4.5" width="3.5" height="3.5" fill="#f4f4f4"/></svg>
<div class="t" style="left:162px;top:508px;font-size:13px;line-height:normal;color:#111;font-weight:normal;font-family:'Liberation Sans', sans-serif;">validation</div>
<svg style="left:145px;top:528px;" width="15" height="15" viewBox="0 0 15 15"><circle cx="7.5" cy="7.5" r="7" fill="#9ad0e4"/><path d="M10.2 5.6 A3.1 3.1 0 1 0 10.2 9.4" fill="none" stroke="#245f78" stroke-width="1.3"/></svg>
<svg style="left:153px;top:527px;" width="8" height="9" viewBox="0 0 8 9"><path d="M1 0 L7 4 L1 8 Z" fill="#5cb85a"/></svg>
<div class="t" style="left:162px;top:528px;font-size:13px;line-height:normal;color:#111;font-weight:normal;font-family:'Liberation Sans', sans-serif;">GenCode</div>
<svg style="left:145px;top:548px;" width="15" height="15" viewBox="0 0 15 15"><circle cx="7.5" cy="7.5" r="7" fill="#9ad0e4"/><path d="M10.2 5.6 A3.1 3.1 0 1 0 10.2 9.4" fill="none" stroke="#245f78" stroke-width="1.3"/></svg>
<svg style="left:153px;top:547px;" width="8" height="9" viewBox="0 0 8 9"><path d="M1 0 L7 4 L1 8 Z" fill="#5cb85a"/></svg>
<svg style="left:151px;top:554px;" width="9" height="9" viewBox="0 0 9 9"><circle cx="4.5" cy="4.5" r="3.8" fill="#b7c4cc"/><circle cx="4.5" cy="4.5" r="2" fill="none" stroke="#eef" stroke-width="1"/></svg>
<div class="t" style="left:162px;top:548px;font-size:13px;line-height:normal;color:#111;font-weight:normal;font-family:'Liberation Sans', sans-serif;">MldongCourseBootApplication</div>
<svg style="left:84px;top:572px;" width="12" height="8" viewBox="0 0 12 8"><path d="M1 1.5 L6 6 L11 1.5" fill="none" stroke="#9a9a9a" stroke-width="1.4"/></svg>
<svg style="left:105px;top:570px;" width="16" height="13" viewBox="0 0 16 13"><path d="M0 0 H5 L6.5 2 H14 V11 H0 Z" fill="#abb1b8"/><rect x="8" y="6" width="7" height="6" fill="#fff"/><path d="M9 7.5h5M9 9.5h5M9 11.5h5" stroke="#d8b640" stroke-width="1.2"/></svg>
<div class="t" style="left:122px;top:568px;font-size:13px;line-height:normal;color:#111;font-weight:normal;font-family:'Liberation Sans', sans-serif;">resources</div>
<svg style="left:104px;top:592px;" width="12" height="8" viewBox="0 0 12 8"><path d="M1 1.5 L6 6 L11 1.5" fill="none" stroke="#9a9a9a" stroke-width="1.4"/></svg>
<svg style="left:125px;top:590px;" width="16" height="13" viewBox="0 0 16 13"><path d="M0 0 H5 L6.5 2 H14 V11 H0 Z" fill="#abb1b8"/></svg>
<div class="t" style="left:142px;top:588px;font-size:13px;line-height:normal;color:#111;font-weight:normal;font-family:'Liberation Sans', sans-serif;">templates</div>
<svg style="left:145px;top:608px;" width="15" height="16" viewBox="0 0 15 16"><path d="M5 0.5 H11 V7 H5 Z" fill="#b9bec4"/><path d="M5 0.5 L2 3.5 V7 H5 Z" fill="#d4d7da"/><rect x="0" y="8" width="14" height="7" fill="#86c77a"/><path d="M4.5 9.5 L2.5 11.5 L4.5 13.5 M9.5 9.5 L11.5 11.5 L9.5 13.5" stroke="#2f6b2f" stroke-width="1" fill="none"/></svg>
<div class="t" style="left:162px;top:608px;font-size:13px;line-height:normal;color:#111;font-weight:normal;font-family:'Liberation Sans', sans-serif;">controller.java.ftl</div>
<svg style="left:145px;top:628px;" width="15" height="16" viewBox="0 0 15 16"><path d="M5 0.5 H11 V7 H5 Z" fill="#b9bec4"/><path d="M5 0.5 L2 3.5 V7 H5 Z" fill="#d4d7da"/><rect x="0" y="8" width="14" height="7" fill="#86c77a"/><path d="M4.5 9.5 L2.5 11.5 L4.5 13.5 M9.5 9.5 L11.5 11.5 L9.5 13.5" stroke="#2f6b2f" stroke-width="1" fill="none"/></svg>
<div class="t" style="left:162px;top:628px;font-size:13px;line-height:normal;color:#111;font-weight:normal;font-family:'Liberation Sans', sans-serif;">entity.java.ftl</div>
<svg style="left:145px;top:648px;" width="15" height="16" viewBox="0 0 15 16"><path d="M5 0.5 H11 V7 H5 Z" fill="#b9bec4"/><path d="M5 0.5 L2 3.5 V7 H5 Z" fill="#d4d7da"/><rect x="0" y="8" width="14" height="7" fill="#86c77a"/><path d="M4.5 9.5 L2.5 11.5 L4.5 13.5 M9.5 9.5 L11.5 11.5 L9.5 13.5" stroke="#2f6b2f" stroke-width="1" fill="none"/></svg>
<div class="t" style="left:162px;top:648px;font-size:13px;line-height:normal;color:#111;font-weight:normal;font-family:'Liberation Sans', sans-serif;">mapper.java.ftl</div>
</div>
<div style="left:865px;top:58px;width:101px;height:24px;background:#f7f7f8;"></div>
<div style="left:865px;top:82px;width:101px;height:3px;background:#4a7db4;"></div>
<svg style="left:448px;top:64px;" width="15" height="15" viewBox="0 0 15 15"><circle cx="7.5" cy="7.5" r="7" fill="#9fd69a"/><path d="M5.5 4.2 H9.5 M7.5 4.2 V10.8 M5.5 10.8 H9.5" fill="none" stroke="#2c5e2c" stroke-width="1.3"/></svg>
<div class="t" style="left:466px;top:64px;font-size:13px;line-height:normal;color:#111;font-weight:normal;font-family:'Liberation Sans', sans-serif;">UserMapper.java</div>
<svg style="left:573px;top:67px;" width="9" height="9" viewBox="0 0 9 9"><path d="M1 1 L8 8 M8 1 L1 8" stroke="#bdbdbd" stroke-width="1"/></svg>
<svg style="left:596px;top:64px;" width="15" height="15" viewBox="0 0 15 15"><circle cx="7.5" cy="7.5" r="7" fill="#9fd69a"/><path d="M5.5 4.2 H9.5 M7.5 4.2 V10.8 M5.5 10.8 H9.5" fill="none" stroke="#2c5e2c" stroke-width="1.3"/></svg>
<div class="t" style="left:614px;top:64px;font-size:13px;line-height:normal;color:#111;font-weight:normal;font-family:'Liberation Sans', sans-serif;">RoleService.java</div>
<svg style="left:713px;top:67px;" width="9" height="9" viewBox="0 0 9 9"><path d="M1 1 L8 8 M8 1 L1 8" stroke="#bdbdbd" stroke-width="1"/></svg>
<svg style="left:735px;top:64px;" width="15" height="15" viewBox="0 0 15 15"><circle cx="7.5" cy="7.5" r="7" fill="#9ad0e4"/><path d="M10.2 5.6 A3.1 3.1 0 1 0 10.2 9.4" fill="none" stroke="#245f78" stroke-width="1.3"/></svg>
<div class="t" style="left:755px;top:64px;font-size:13px;line-height:normal;color:#111;font-weight:normal;font-family:'Liberation Sans', sans-serif;">RoleParam.java</div>
<svg style="left:850px;top:67px;" width="9" height="9" viewBox="0 0 9 9"><path d="M1 1 L8 8 M8 1 L1 8" stroke="#bdbdbd" stroke-width="1"/></svg>
<svg style="left:873px;top:64px;" width="15" height="15" viewBox="0 0 15 15"><circle cx="7.5" cy="7.5" r="7" fill="#9ad0e4"/><path d="M10.2 5.6 A3.1 3.1 0 1 0 10.2 9.4" fill="none" stroke="#245f78" stroke-width="1.3"/></svg>
<div class="t" style="left:892px;top:64px;font-size:13px;line-height:normal;color:#111;font-weight:normal;font-family:'Liberation Sans', sans-serif;">Role.java</div>
<svg style="left:950px;top:67px;" width="9" height="9" viewBox="0 0 9 9"><path d="M1 1 L8 8 M8 1 L1 8" stroke="#bdbdbd" stroke-width="1"/></svg>
<svg style="left:973px;top:64px;" width="15" height="15" viewBox="0 0 15 15"><circle cx="7.5" cy="7.5" r="7" fill="#9ad0e4"/><path d="M10.2 5.6 A3.1 3.1 0 1 0 10.2 9.4" fill="none" stroke="#245f78" stroke-width="1.3"/></svg>
<div class="t" style="left:992px;top:64px;font-size:13px;line-height:normal;color:#111;font-weight:normal;font-family:'Liberation Sans', sans-serif;">RoleController.java</div>
<svg style="left:1108px;top:67px;" width="9" height="9" viewBox="0 0 9 9"><path d="M1 1 L8 8 M8 1 L1 8" stroke="#bdbdbd" stroke-width="1"/></svg>
<svg style="left:1131px;top:64px;" width="15" height="15" viewBox="0 0 15 15"><circle cx="7.5" cy="7.5" r="7" fill="#9fd69a"/><path d="M5.5 4.2 H9.5 M7.5 4.2 V10.8 M5.5 10.8 H9.5" fill="none" stroke="#2c5e2c" stroke-width="1.3"/></svg>
<div class="t" style="left:1150px;top:64px;font-size:13px;line-height:normal;color:#111;font-weight:normal;font-family:'Liberation Sans', sans-serif;">UserRoleMapper.java</div>
<svg style="left:1282px;top:67px;" width="9" height="9" viewBox="0 0 9 9"><path d="M1 1 L8 8 M8 1 L1 8" stroke="#bdbdbd" stroke-width="1"/></svg>
<svg style="left:1306px;top:65px;" width="16" height="16" viewBox="0 0 16 16"><path d="M6 0 H12 V6.5 H6 Z" fill="#b9bec4"/><path d="M6 0 L2 4 V6.5 H6 Z" fill="#d4d7da"/><rect x="0" y="8" width="15" height="6.5" fill="#e58a6b"/><path d="M4.5 9.5 L2.5 11.2 L4.5 13 M9.5 9.5 L11.5 11.2 L9.5 13" stroke="#a8432a" stroke-width="1" fill="none"/></svg>
<div class="t" style="left:1324px;top:64px;font-size:13px;line-height:normal;color:#111;font-weight:normal;font-family:'Liberation Sans', sans-serif;">RoleMenuMapper.xml</div>
<svg style="left:1459px;top:67px;" width="9" height="9" viewBox="0 0 9 9"><path d="M1 1 L8 8 M8 1 L1 8" stroke="#bdbdbd" stroke-width="1"/></svg>
<svg style="left:1482px;top:64px;" width="15" height="15" viewBox="0 0 15 15"><circle cx="7.5" cy="7.5" r="7" fill="#9ad0e4"/><path d="M10.2 5.6 A3.1 3.1 0 1 0 10.2 9.4" fill="none" stroke="#245f78" stroke-width="1.3"/></svg>
<div class="t" style="left:1501px;top:64px;font-size:13px;line-height:normal;color:#111;font-weight:normal;font-family:'Liberation Sans', sans-serif;">MenuServiceImpl.java</div>
<svg style="left:1633px;top:67px;" width="9" height="9" viewBox="0 0 9 9"><path d="M1 1 L8 8 M8 1 L1 8" stroke="#bdbdbd" stroke-width="1"/></svg>
<div class="t" style="left:1901px;top:63px;font-size:16px;line-height:normal;color:#6e6e6e;font-weight:bold;font-family:'Liberation Sans', sans-serif;font-style:italic;">m</div>
<svg style="left:1885px;top:86px;" width="13" height="11" viewBox="0 0 13 11"><path d="M1 5.5 L5 9 L12 1.5" fill="none" stroke="#59a869" stroke-width="2.2"/></svg>
<div style="left:0;top:0;width:1920px;height:1080px;clip-path:inset(85px 21px 444px 439px);">
<div class="t" style="left:444px;top:81px;font-size:17px;line-height:normal;color:#9a9a9a;font-weight:normal;font-family:'Liberation Mono', monospace;letter-spacing:-0.7px;">51</div>
<div class="t" style="left:562px;top:80px;font-size:18.33px;line-height:normal;color:#808000;font-weight:normal;font-family:'Liberation Mono', monospace;">@ApiModelProperty</div>
<div class="t" style="left:749px;top:80px;font-size:18.33px;line-height:normal;color:#000;font-weight:normal;font-family:'Liberation Mono', monospace;">(</div>
<div class="t" style="left:760px;top:80px;font-size:18.33px;line-height:normal;color:#1f8a1f;font-weight:bold;font-family:'Liberation Mono', monospace;">&quot;</div>
<svg style="left:771px;top:78px;" width="86" height="20" viewBox="0 0 86 20"><path transform="translate(1.5,0.5) scale(0.95)" d="M7 1 L1 8 M7 1 L12 7 M3 9 V17 Q3 18 9 17.5 V13 M3 9 H9 V13 M15 3 V13 M18.5 1 V17 Q18.5 18 16 17.5" fill="none" stroke="#238c23" stroke-width="2.1" stroke-linecap="square"/><path transform="translate(22.5,0.5) scale(0.95)" d="M2 2 H6 L3 8 H7 Q6 14 1 17.5 M3 12 Q6 17 19 17.5 M8 3 H17 V7 H8 M12 1 V15 M8 10 H18 M9 13 H17" fill="none" stroke="#238c23" stroke-width="2.1" stroke-linecap="square"/><path transform="translate(43.5,0.5) scale(0.95)" d="M3 2 V12 Q3 16 1 17.5 M3 2 H17 V16 Q17 17.5 15 17 M3 7 H17 M3 11.5 H17 M10 2 V17.5" fill="none" stroke="#238c23" stroke-width="2.1" stroke-linecap="square"/><path transform="translate(64.5,0.5) scale(0.95)" d="M9 0.5 L11 2.5 M4 4 H16 V10 H4 M4 4 V10 Q4 15 1 17.5" fill="none" stroke="#238c23" stroke-width="2.1" stroke-linecap="square"/></svg>
<div class="t" style="left:855px;top:80px;font-size:18.33px;line-height:normal;color:#1f8a1f;font-weight:bold;font-family:'Liberation Mono', monospace;">&quot;</div>
<div class="t" style="left:866px;top:80px;font-size:18.33px;line-height:normal;color:#000;font-weight:normal;font-family:'Liberation Mono', monospace;">)</div>
<div class="t" style="left:444px;top:110px;font-size:17px;line-height:normal;color:#9a9a9a;font-weight:normal;font-family:'Liberation Mono', monospace;letter-spacing:-0.7px;">52</div>
<div class="t" style="left:562px;top:109px;font-size:18.33px;line-height:normal;color:#000080;font-weight:bold;font-family:'Liberation Mono', monospace;">private</div>
<div class="t" style="left:650px;top:109px;font-size:18.33px;line-height:normal;color:#000;font-weight:normal;font-family:'Liberation Mono', monospace;">Long</div>
<div class="t" style="left:705px;top:109px;font-size:18.33px;line-height:normal;color:#660e7a;font-weight:bold;font-family:'Liberation Mono', monospace;">createUser</div>
<div class="t" style="left:815px;top:109px;font-size:18.33px;line-height:normal;color:#000;font-weight:bold;font-family:'Liberation Mono', monospace;">;</div>
<div class="t" style="left:444px;top:139px;font-size:17px;line-height:normal;color:#9a9a9a;font-weight:normal;font-family:'Liberation Mono', monospace;letter-spacing:-0.7px;">53</div>
<div class="t" style="left:444px;top:168px;font-size:17px;line-height:normal;color:#9a9a9a;font-weight:normal;font-family:'Liberation Mono', monospace;letter-spacing:-0.7px;">54</div>
<div class="t" style="left:562px;top:167px;font-size:18.33px;line-height:normal;color:#808000;font-weight:normal;font-family:'Liberation Mono', monospace;">@ApiModelProperty</div>
<div class="t" style="left:749px;top:167px;font-size:18.33px;line-height:normal;color:#000;font-weight:normal;font-family:'Liberation Mono', monospace;">(</div>
<div class="t" style="left:760px;top:167px;font-size:18.33px;line-height:normal;color:#1f8a1f;font-weight:bold;font-family:'Liberation Mono', monospace;">&quot;</div>
<svg style="left:771px;top:165px;" width="86" height="20" viewBox="0 0 86 20"><path transform="translate(1.5,0.5) scale(0.95)" d="M1 1.5 H19 M4 4 H16 V12 H4 Z M4 8 H16 M10 1.5 V12 Q8 16 2 17.5 M6 12 Q10 16 19 17.5" fill="none" stroke="#238c23" stroke-width="2.1" stroke-linecap="square"/><path transform="translate(22.5,0.5) scale(0.95)" d="M5 0.5 V2.5 M1 3 H9 M3 4 L4 6 M7 4 L6 6 M1 7 H9 M1 10 H9 M5 7 V17.5 M5 11 L1 15 M5 11 L9 14 M18 1 L12 3 V17 M12 8 H19 M16 8 V17.5" fill="none" stroke="#238c23" stroke-width="2.1" stroke-linecap="square"/><path transform="translate(43.5,0.5) scale(0.95)" d="M1 3 H7 V15 H1 Z M1 9 H7 M9 5 H19 M16 1 V16 Q16 17.5 14 17 M11 9 L13 11" fill="none" stroke="#238c23" stroke-width="2.1" stroke-linecap="square"/><path transform="translate(64.5,0.5) scale(0.95)" d="M3 0.5 L5 2.5 M2 4 V17.5 M7 2 H18 V16 Q18 17.5 16 17 M7 6 H13 V14 H7 Z M7 10 H13" fill="none" stroke="#238c23" stroke-width="2.1" stroke-linecap="square"/></svg>
<div class="t" style="left:855px;top:167px;font-size:18.33px;line-height:normal;color:#1f8a1f;font-weight:bold;font-family:'Liberation Mono', monospace;">&quot;</div>
<div class="t" style="left:866px;top:167px;font-size:18.33px;line-height:normal;color:#000;font-weight:normal;font-family:'Liberation Mono', monospace;">)</div>
<div class="t" style="left:444px;top:197px;font-size:17px;line-height:normal;color:#9a9a9a;font-weight:normal;font-family:'Liberation Mono', monospace;letter-spacing:-0.7px;">55</div>
<div class="t" style="left:562px;top:196px;font-size:18.33px;line-height:normal;color:#000080;font-weight:bold;font-family:'Liberation Mono', monospace;">private</div>
<div class="t" style="left:650px;top:196px;font-size:18.33px;line-height:normal;color:#000;font-weight:normal;font-family:'Liberation Mono', monospace;">Date</div>
<div class="t" style="left:705px;top:196px;font-size:18.33px;line-height:normal;color:#660e7a;font-weight:bold;font-family:'Liberation Mono', monospace;">updateTime</div>
<div class="t" style="left:815px;top:196px;font-size:18.33px;line-height:normal;color:#000;font-weight:bold;font-family:'Liberation Mono', monospace;">;</div>
<div class="t" style="left:444px;top:226px;font-size:17px;line-height:normal;color:#9a9a9a;font-weight:normal;font-family:'Liberation Mono', monospace;letter-spacing:-0.7px;">56</div>
<div class="t" style="left:444px;top:255px;font-size:17px;line-height:normal;color:#9a9a9a;font-weight:normal;font-family:'Liberation Mono', monospace;letter-spacing:-0.7px;">57</div>
<div class="t" style="left:562px;top:254px;font-size:18.33px;line-height:normal;color:#808000;font-weight:normal;font-family:'Liberation Mono', monospace;">@ApiModelProperty</div>
<div class="t" style="left:749px;top:254px;font-size:18.33px;line-height:normal;color:#000;font-weight:normal;font-family:'Liberation Mono', monospace;">(</div>
<div class="t" style="left:760px;top:254px;font-size:18.33px;line-height:normal;color:#1f8a1f;font-weight:bold;font-family:'Liberation Mono', monospace;">&quot;</div>
<svg style="left:771px;top:252px;" width="86" height="20" viewBox="0 0 86 20"><path transform="translate(1.5,0.5) scale(0.95)" d="M1 1.5 H19 M4 4 H16 V12 H4 Z M4 8 H16 M10 1.5 V12 Q8 16 2 17.5 M6 12 Q10 16 19 17.5" fill="none" stroke="#238c23" stroke-width="2.1" stroke-linecap="square"/><path transform="translate(22.5,0.5) scale(0.95)" d="M5 0.5 V2.5 M1 3 H9 M3 4 L4 6 M7 4 L6 6 M1 7 H9 M1 10 H9 M5 7 V17.5 M5 11 L1 15 M5 11 L9 14 M18 1 L12 3 V17 M12 8 H19 M16 8 V17.5" fill="none" stroke="#238c23" stroke-width="2.1" stroke-linecap="square"/><path transform="translate(43.5,0.5) scale(0.95)" d="M3 2 V12 Q3 16 1 17.5 M3 2 H17 V16 Q17 17.5 15 17 M3 7 H17 M3 11.5 H17 M10 2 V17.5" fill="none" stroke="#238c23" stroke-width="2.1" stroke-linecap="square"/><path transform="translate(64.5,0.5) scale(0.95)" d="M9 0.5 L11 2.5 M4 4 H16 V10 H4 M4 4 V10 Q4 15 1 17.5" fill="none" stroke="#238c23" stroke-width="2.1" stroke-linecap="square"/></svg>
<div class="t" style="left:855px;top:254px;font-size:18.33px;line-height:normal;color:#1f8a1f;font-weight:bold;font-family:'Liberation Mono', monospace;">&quot;</div>
<div class="t" style="left:866px;top:254px;font-size:18.33px;line-height:normal;color:#000;font-weight:normal;font-family:'Liberation Mono', monospace;">)</div>
<div class="t" style="left:444px;top:284px;font-size:17px;line-height:normal;color:#9a9a9a;font-weight:normal;font-family:'Liberation Mono', monospace;letter-spacing:-0.7px;">58</div>
<div class="t" style="left:562px;top:283px;font-size:18.33px;line-height:normal;color:#000080;font-weight:bold;font-family:'Liberation Mono', monospace;">private</div>
<div class="t" style="left:650px;top:283px;font-size:18.33px;line-height:normal;color:#000;font-weight:normal;font-family:'Liberation Mono', monospace;">Long</div>
<div class="t" style="left:705px;top:283px;font-size:18.33px;line-height:normal;color:#660e7a;font-weight:bold;font-family:'Liberation Mono', monospace;">updateUser</div>
<div class="t" style="left:815px;top:283px;font-size:18.33px;line-height:normal;color:#000;font-weight:bold;font-family:'Liberation Mono', monospace;">;</div>
<div class="t" style="left:444px;top:313px;font-size:17px;line-height:normal;color:#9a9a9a;font-weight:normal;font-family:'Liberation Mono', monospace;letter-spacing:-0.7px;">59</div>
<div class="t" style="left:444px;top:342px;font-size:17px;line-height:normal;color:#9a9a9a;font-weight:normal;font-family:'Liberation Mono', monospace;letter-spacing:-0.7px;">60</div>
<div class="t" style="left:562px;top:341px;font-size:18.33px;line-height:normal;color:#808000;font-weight:normal;font-family:'Liberation Mono', monospace;">@ApiModelProperty</div>
<div class="t" style="left:749px;top:341px;font-size:18.33px;line-height:normal;color:#000;font-weight:normal;font-family:'Liberation Mono', monospace;">(</div>
<div class="t" style="left:760px;top:341px;font-size:18.33px;line-height:normal;color:#1f8a1f;font-weight:bold;font-family:'Liberation Mono', monospace;">&quot;</div>
<svg style="left:771px;top:339px;" width="86" height="20" viewBox="0 0 86 20"><path transform="translate(1.5,0.5) scale(0.95)" d="M5 1 H15 V8 H5 Z M5 4.5 H15 M1 10 H19 M10 10 V16 M10 13 H16 M6 12 Q5 16 1 17.5 M6 15 Q10 17.5 19 17.5" fill="none" stroke="#238c23" stroke-width="2.1" stroke-linecap="square"/><path transform="translate(22.5,0.5) scale(0.95)" d="M2 1.5 H18 M12 1.5 Q8 6 2 9 M10 4 V9 M13 5 L17 8 M5 11 H15 V17.5 H5 Z" fill="none" stroke="#238c23" stroke-width="2.1" stroke-linecap="square"/><path transform="translate(43.5,0.5) scale(0.95)" d="M2 2 H6 V17 M2 2 V17.5 M8 2 H12 V17 M8 2 V17.5 M0.5 9 H13 M15 3 V13 M18.5 1 V17 Q18.5 18 16 17.5" fill="none" stroke="#238c23" stroke-width="2.1" stroke-linecap="square"/><path transform="translate(64.5,0.5) scale(0.95)" d="M2 1 V17.5 M2 1.5 H6 Q4 5 5 7 Q7 10 2 12 M13 1 L8 6 M13 1 L19 6 M10 7 H16 M8 10 H18 M13 7 V17 Q13 18 11 17.5 M10 12 L8 15 M16 12 L18 15" fill="none" stroke="#238c23" stroke-width="2.1" stroke-linecap="square"/></svg>
<div class="t" style="left:855px;top:341px;font-size:18.33px;line-height:normal;color:#1f8a1f;font-weight:bold;font-family:'Liberation Mono', monospace;">&quot;</div>
<div class="t" style="left:866px;top:341px;font-size:18.33px;line-height:normal;color:#000;font-weight:normal;font-family:'Liberation Mono', monospace;">)</div>
<div class="t" style="left:444px;top:371px;font-size:17px;line-height:normal;color:#9a9a9a;font-weight:normal;font-family:'Liberation Mono', monospace;letter-spacing:-0.7px;">61</div>
<div class="t" style="left:562px;top:370px;font-size:18.33px;line-height:normal;color:#808000;font-weight:normal;font-family:'Liberation Mono', monospace;">@TableLogic</div>
<div class="t" style="left:444px;top:400px;font-size:17px;line-height:normal;color:#9a9a9a;font-weight:normal;font-family:'Liberation Mono', monospace;letter-spacing:-0.7px;">62</div>
<div class="t" style="left:562px;top:399px;font-size:18.33px;line-height:normal;color:#000080;font-weight:bold;font-family:'Liberation Mono', monospace;">private</div>
<div class="t" style="left:650px;top:399px;font-size:18.33px;line-height:normal;color:#000;font-weight:normal;font-family:'Liberation Mono', monospace;">Boolean</div>
<div class="t" style="left:738px;top:399px;font-size:18.33px;line-height:normal;color:#660e7a;font-weight:bold;font-family:'Liberation Mono', monospace;">isDeleted</div>
<div class="t" style="left:837px;top:399px;font-size:18.33px;line-height:normal;color:#000;font-weight:bold;font-family:'Liberation Mono', monospace;">;</div>
<div class="t" style="left:444px;top:429px;font-size:17px;line-height:normal;color:#9a9a9a;font-weight:normal;font-family:'Liberation Mono', monospace;letter-spacing:-0.7px;">63</div>
<div class="t" style="left:444px;top:458px;font-size:17px;line-height:normal;color:#9a9a9a;font-weight:normal;font-family:'Liberation Mono', monospace;letter-spacing:-0.7px;">64</div>
<div class="t" style="left:444px;top:487px;font-size:17px;line-height:normal;color:#9a9a9a;font-weight:normal;font-family:'Liberation Mono', monospace;letter-spacing:-0.7px;">65</div>
<div class="t" style="left:518px;top:486px;font-size:18.33px;line-height:normal;color:#000;font-weight:normal;font-family:'Liberation Mono', monospace;">}</div>
<div class="t" style="left:444px;top:516px;font-size:17px;line-height:normal;color:#9a9a9a;font-weight:normal;font-family:'Liberation Mono', monospace;letter-spacing:-0.7px;">66</div>
<svg style="left:503px;top:342px;" width="14" height="16" viewBox="0 0 14 16"><path d="M1.5 1.5 H12.5 V9 L7 14 L1.5 9 Z" fill="#fff" stroke="#c8c8c8"/><path d="M4 7 H10" stroke="#b0b0b0"/></svg>
<svg style="left:503px;top:371px;" width="14" height="16" viewBox="0 0 14 16"><path d="M1.5 14.5 H12.5 V7 L7 2 L1.5 7 Z" fill="#fff" stroke="#c8c8c8"/><path d="M4 9 H10" stroke="#b0b0b0"/></svg>
<div style="left:1889px;top:459px;width:10px;height:177px;background:#dcdcdc;"></div>
</div>
<svg style="left:864px;top:593px;" width="10" height="20" viewBox="0 0 10 20"><path d="M1 1 H9 M5 1 V19 M1 19 H9" stroke="#111" stroke-width="1.6"/></svg>
<div class="t" style="left:520px;top:641px;font-size:13px;line-height:normal;color:#555;font-weight:normal;font-family:'Liberation Sans', sans-serif;">Role</div>
<svg style="left:556px;top:643px;" width="6" height="10" viewBox="0 0 6 10"><path d="M1 1 L5 5 L1 9" fill="none" stroke="#999" stroke-width="1"/></svg>
<div class="t" style="left:570px;top:641px;font-size:13px;line-height:normal;color:#555;font-weight:normal;font-family:'Liberation Sans', sans-serif;">createTime</div>
<div class="t" style="left:28px;top:667px;font-size:13px;line-height:normal;color:#222;font-weight:normal;font-family:'Liberation Sans', sans-serif;">Run:</div>
<div style="left:60px;top:685px;width:112px;height:3px;background:#a9aeb9;"></div>
<svg style="left:72px;top:666px;" width="15" height="15" viewBox="0 0 15 15"><rect x="3.5" y="0.5" width="11" height="10" fill="none" stroke="#d0d6da"/><rect x="0.5" y="3.5" width="11" height="10" fill="#d8e8ef" stroke="#c8d0d6"/></svg>
<div class="t" style="left:92px;top:667px;font-size:13px;line-height:normal;color:#222;font-weight:normal;font-family:'Liberation Sans', sans-serif;">GenCode</div>
<svg style="left:153px;top:670px;" width="9" height="9" viewBox="0 0 9 9"><path d="M1 1 L8 8 M8 1 L1 8" stroke="#bdbdbd" stroke-width="1"/></svg>
<svg style="left:183px;top:665px;" width="20" height="17" viewBox="0 0 20 17"><path d="M1 10 Q3 3 11 2 Q9 9 1 10 Z" fill="#b3d7a8"/><circle cx="12" cy="10" r="5" fill="#e3ece0" stroke="#a8c3a0" stroke-width="1.2"/><circle cx="15" cy="13" r="3" fill="#5fbf5a"/></svg>
<div class="t" style="left:204px;top:667px;font-size:13px;line-height:normal;color:#222;font-weight:normal;font-family:'Liberation Sans', sans-serif;">MldongCourseBootApplication</div>
<svg style="left:391px;top:670px;" width="9" height="9" viewBox="0 0 9 9"><path d="M1 1 L8 8 M8 1 L1 8" stroke="#bdbdbd" stroke-width="1"/></svg>
<svg style="left:31px;top:695px;" width="12" height="14" viewBox="0 0 12 14"><path d="M1 0 L11 7 L1 14 Z" fill="#59a869"/></svg>
<div style="left:31px;top:722px;width:10px;height:10px;background:#c4c4c4;"></div>
<svg style="left:29px;top:747px;" width="15" height="13" viewBox="0 0 15 13"><path d="M1 3 H4 L5.5 1 H9.5 L11 3 H14 V12 H1 Z" fill="#c4c4c4"/><circle cx="7.5" cy="7.5" r="2.8" fill="#f2f2f2"/><circle cx="7.5" cy="7.5" r="1.6" fill="#c4c4c4"/></svg>
<svg style="left:29px;top:772px;" width="16" height="16" viewBox="0 0 16 16"><ellipse cx="7" cy="9" rx="4.5" ry="5" fill="#c4c4c4"/><path d="M1 6 H13 M0 9.5 H14 M1 13 H13" stroke="#c4c4c4" stroke-width="1.4"/><path d="M9 11 L15 15 M12 15 H15 V12" stroke="#b8b8b8" stroke-width="1.4" fill="none"/></svg>
<svg style="left:29px;top:798px;" width="15" height="15" viewBox="0 0 15 15"><path d="M5 1 H14 V14 H5 M1 4 V1 H5 M1 11 V14 H5" fill="none" stroke="#c4c4c4" stroke-width="1.4"/><path d="M2 7.5 H10 M7 4.5 L10 7.5 L7 10.5" fill="none" stroke="#c4c4c4" stroke-width="1.4"/></svg>
<div style="left:26px;top:821px;width:20px;height:1px;background:#d6d6d6;"></div>
<svg style="left:29px;top:832px;" width="14" height="12" viewBox="0 0 14 12"><rect x="0" y="0" width="6" height="5" fill="#6e6e6e"/><rect x="7" y="0" width="7" height="5" fill="#6e6e6e"/><rect x="0" y="7" width="14" height="5" fill="#6e6e6e"/></svg>
<div style="left:26px;top:854px;width:20px;height:1px;background:#d6d6d6;"></div>
<svg style="left:28px;top:864px;" width="16" height="16" viewBox="0 0 16 16"><path d="M9 1 L15 7 L12 8 L8 12 L7 10 L2 15 L1 14 L6 9 L4 8 L8 4 Z" fill="#6e6e6e"/></svg>
<svg style="left:58px;top:694px;" width="14" height="16" viewBox="0 0 14 16"><path d="M7 15 V2 M2 7 L7 1.5 L12 7" fill="none" stroke="#c4c4c4" stroke-width="1.6"/></svg>
<svg style="left:58px;top:720px;" width="14" height="16" viewBox="0 0 14 16"><path d="M7 1 V14 M2 9 L7 14.5 L12 9" fill="none" stroke="#c4c4c4" stroke-width="1.6"/></svg>
<div style="left:54px;top:743px;width:22px;height:22px;background:#d4d4d4;"></div>
<svg style="left:57px;top:746px;" width="16" height="16" viewBox="0 0 16 16"><path d="M1 2.5 H14 M5 7.5 H12 A3 3 0 0 1 12 13.5 H7 M9 11 L6.5 13.5 L9 16 M1 7.5 H2.5 M1 12.5 H2.5" fill="none" stroke="#6e6e6e" stroke-width="1.6"/></svg>
<div style="left:54px;top:768px;width:22px;height:23px;background:#d4d4d4;"></div>
<svg style="left:57px;top:772px;" width="16" height="15" viewBox="0 0 16 15"><path d="M1 2 H5 M1 6 H5 M1 10 H5 M1 14 H15 M11 1 V10 M8 7 L11 10 L14 7" fill="none" stroke="#6e6e6e" stroke-width="1.6"/></svg>
<svg style="left:57px;top:799px;" width="16" height="15" viewBox="0 0 16 15"><rect x="4" y="0" width="8" height="4" fill="#6e6e6e"/><rect x="0" y="4" width="16" height="6" fill="#6e6e6e"/><rect x="4" y="9" width="8" height="5" fill="#fff" stroke="#6e6e6e" stroke-width="1.4"/></svg>
<svg style="left:59px;top:825px;" width="12" height="15" viewBox="0 0 12 15"><rect x="0" y="2" width="12" height="2" fill="#c4c4c4"/><rect x="4" y="0" width="4" height="2" fill="#c4c4c4"/><path d="M1 5 H11 L10 15 H2 Z" fill="#c4c4c4"/></svg>
<div class="t" style="left:12px;top:117px;font-size:11.7px;line-height:14px;color:#222;transform-origin:0 0;transform:rotate(-90deg) translate(0,-7px);"><u>1</u>: Project</div>
<svg style="left:5px;top:122px;" width="13" height="11" viewBox="0 0 13 11"><path d="M0 0 H5 L6.5 2 H12 V10 H0 Z" fill="#6b6b6b"/></svg>
<div class="t" style="left:12px;top:811px;font-size:11.7px;line-height:14px;color:#222;transform-origin:0 0;transform:rotate(-90deg) translate(0,-7px);"><u>7</u>: Structure</div>
<svg style="left:6px;top:816px;" width="11" height="11" viewBox="0 0 11 11"><rect x="0" y="6" width="4" height="4" fill="#555"/><rect x="6" y="6" width="4" height="4" fill="#555"/><rect x="6" y="0" width="4" height="4" fill="#555"/></svg>
<div class="t" style="left:12px;top:910px;font-size:11.7px;line-height:14px;color:#222;transform-origin:0 0;transform:rotate(-90deg) translate(0,-7px);"><u>2</u>: Favorites</div>
<svg style="left:5px;top:914px;" width="13" height="13" viewBox="0 0 13 13"><path d="M6.5 0 L8.3 4.5 L13 4.8 L9.3 7.8 L10.5 12.5 L6.5 9.8 L2.5 12.5 L3.7 7.8 L0 4.8 L4.7 4.5 Z" fill="#555"/></svg>
<div class="t" style="left:12px;top:971px;font-size:11.7px;line-height:14px;color:#222;transform-origin:0 0;transform:rotate(-90deg) translate(0,-7px);">Web</div>
<svg style="left:5px;top:974px;" width="13" height="13" viewBox="0 0 13 13"><circle cx="6.5" cy="6.5" r="6" fill="#6e6e6e"/><path d="M3 3 Q6 5 4 8 Q7 9 6 12 M9 1.5 Q8 5 11 6" stroke="#f2f2f2" stroke-width="1.3" fill="none"/></svg>
<div class="t" style="left:1909px;top:85px;font-size:11.7px;line-height:14px;color:#222;transform-origin:0 0;transform:rotate(90deg) translate(0,-7px);">Maven</div>
<svg style="left:1902px;top:144px;" width="14" height="15" viewBox="0 0 14 15"><path d="M13 1 L5 7.5" stroke="#5ecbf2" stroke-width="3.4"/><path d="M5 7.5 L9 11" stroke="#5ecbf2" stroke-width="3.4"/><path d="M8.5 10.5 L12.5 14" stroke="#1f66a8" stroke-width="3.4"/></svg>
<div class="t" style="left:1909px;top:160px;font-size:11.7px;line-height:14px;color:#222;transform-origin:0 0;transform:rotate(90deg) translate(0,-7px);">Flutter Inspector</div>
<svg style="left:1902px;top:268px;" width="13" height="14" viewBox="0 0 13 14"><ellipse cx="6.5" cy="2.5" rx="5.5" ry="2.2" fill="#777"/><path d="M1 4 V11.5 A5.5 2.2 0 0 0 12 11.5 V4" fill="#888"/><path d="M1 6.5 A5.5 2 0 0 0 12 6.5 M1 9 A5.5 2 0 0 0 12 9" stroke="#eee" fill="none"/></svg>
<div class="t" style="left:1909px;top:285px;font-size:11.7px;line-height:14px;color:#222;transform-origin:0 0;transform:rotate(90deg) translate(0,-7px);">Database</div>
<svg style="left:1902px;top:356px;" width="14" height="15" viewBox="0 0 14 15"><path d="M13 1 L5 7.5" stroke="#5ecbf2" stroke-width="3.4"/><path d="M5 7.5 L9 11" stroke="#5ecbf2" stroke-width="3.4"/><path d="M8.5 10.5 L12.5 14" stroke="#1f66a8" stroke-width="3.4"/></svg>
<div class="t" style="left:1909px;top:374px;font-size:11.7px;line-height:14px;color:#222;transform-origin:0 0;transform:rotate(90deg) translate(0,-7px);">Flutter Outline</div>
<svg style="left:1902px;top:475px;" width="14" height="15" viewBox="0 0 14 15"><path d="M13 1 L5 7.5" stroke="#5ecbf2" stroke-width="3.4"/><path d="M5 7.5 L9 11" stroke="#5ecbf2" stroke-width="3.4"/><path d="M8.5 10.5 L12.5 14" stroke="#1f66a8" stroke-width="3.4"/></svg>
<div class="t" style="left:1909px;top:492px;font-size:11.7px;line-height:14px;color:#222;transform-origin:0 0;transform:rotate(90deg) translate(0,-7px);">Flutter Performance</div>
<svg style="left:1902px;top:617px;" width="14" height="14" viewBox="0 0 14 14"><circle cx="7" cy="7" r="3" fill="#777"/><path d="M7 0 V14 M0 7 H14 M2 2 L12 12 M12 2 L2 12" stroke="#777" stroke-width="1.3"/></svg>
<div class="t" style="left:1909px;top:633px;font-size:11.7px;line-height:14px;color:#222;transform-origin:0 0;transform:rotate(90deg) translate(0,-7px);">Ant</div>
<svg style="left:1902px;top:676px;" width="13" height="12" viewBox="0 0 13 12"><g fill="#555"><rect x="0" y="0" width="3" height="3"/><rect x="5" y="0" width="3" height="3"/><rect x="10" y="0" width="3" height="3"/><rect x="0" y="4.5" width="3" height="3"/><rect x="5" y="4.5" width="3" height="3"/><rect x="10" y="4.5" width="3" height="3"/><rect x="0" y="9" width="3" height="3"/><rect x="5" y="9" width="3" height="3"/><rect x="10" y="9" width="3" height="3"/></g></svg>
<div class="t" style="left:1909px;top:691px;font-size:11.7px;line-height:14px;color:#222;transform-origin:0 0;transform:rotate(90deg) translate(0,-7px);">SciView</div>
<svg style="left:1902px;top:753px;" width="13" height="13" viewBox="0 0 13 13"><circle cx="6.5" cy="6.5" r="5.5" fill="#777"/><path d="M3 7 L6 10 L11 3" stroke="#f2f2f2" stroke-width="1.8" fill="none"/></svg>
<div class="t" style="left:1909px;top:770px;font-size:11.7px;line-height:14px;color:#222;transform-origin:0 0;transform:rotate(90deg) translate(0,-7px);">Bean Validation</div>
<svg style="left:33px;top:1002px;" width="13" height="15" viewBox="0 0 13 15"><path d="M1 1 L9 6.5 L1 12 Z" fill="#6e6e6e"/><circle cx="9.5" cy="12" r="2.5" fill="#3fbf3f"/></svg>
<div class="t" style="left:48px;top:1003px;font-size:12.2px;line-height:normal;color:#222;font-weight:normal;font-family:'Liberation Sans', sans-serif;letter-spacing:-0.35px;"><u>4</u>: Run</div>
<svg style="left:103px;top:1002px;" width="13" height="14" viewBox="0 0 13 14"><ellipse cx="6.5" cy="8" rx="4.5" ry="5" fill="#6e6e6e"/><path d="M0.5 5 H12.5 M0 8 H13 M0.5 11 H12.5 M3 1 L5 3.5 M10 1 L8 3.5" stroke="#6e6e6e" stroke-width="1.3"/></svg>
<div class="t" style="left:119px;top:1003px;font-size:12.2px;line-height:normal;color:#222;font-weight:normal;font-family:'Liberation Sans', sans-serif;letter-spacing:-0.35px;"><u>5</u>: Debug</div>
<svg style="left:189px;top:1003px;" width="12" height="11" viewBox="0 0 12 11"><g fill="#6e6e6e"><rect x="0" y="0" width="2" height="2"/><rect x="3" y="0" width="9" height="2"/><rect x="0" y="4" width="2" height="2"/><rect x="3" y="4" width="9" height="2"/><rect x="0" y="8" width="2" height="2"/><rect x="3" y="8" width="9" height="2"/></g></svg>
<div class="t" style="left:204px;top:1003px;font-size:12.2px;line-height:normal;color:#222;font-weight:normal;font-family:'Liberation Sans', sans-serif;letter-spacing:-0.35px;"><u>6</u>: TODO</div>
<svg style="left:269px;top:1003px;" width="13" height="11" viewBox="0 0 13 11"><path d="M1 10 Q1 3 12 1 Q11 9 3 9.5 Z" fill="#6e6e6e"/><path d="M0 11 Q5 6 9 4" stroke="#f2f2f2" stroke-width="1" fill="none"/></svg>
<div class="t" style="left:286px;top:1003px;font-size:12.2px;line-height:normal;color:#222;font-weight:normal;font-family:'Liberation Sans', sans-serif;letter-spacing:-0.35px;">Spring</div>
<svg style="left:341px;top:1003px;" width="12" height="12" viewBox="0 0 12 12"><rect width="12" height="12" fill="#6e6e6e"/><path d="M2.5 3 L5.5 6 L2.5 9" stroke="#f2f2f2" stroke-width="1.2" fill="none"/></svg>
<div class="t" style="left:357px;top:1003px;font-size:12.2px;line-height:normal;color:#222;font-weight:normal;font-family:'Liberation Sans', sans-serif;letter-spacing:-0.35px;">Terminal</div>
<svg style="left:424px;top:1001px;" width="14" height="14" viewBox="0 0 14 14"><circle cx="7" cy="7" r="6" fill="none" stroke="#6e6e6e" stroke-width="1.3"/><path d="M7 1 V7 H13" fill="none" stroke="#6e6e6e" stroke-width="1.3"/></svg>
<div class="t" style="left:443px;top:1003px;font-size:12.2px;line-height:normal;color:#222;font-weight:normal;font-family:'Liberation Sans', sans-serif;letter-spacing:-0.35px;">Statistic</div>
<svg style="left:506px;top:1002px;" width="13" height="13" viewBox="0 0 13 13"><path d="M0.5 0.5 H10 V3 H12.5 V12.5 H0.5 Z" fill="none" stroke="#6e6e6e" stroke-width="1.2"/><rect x="3" y="5" width="3" height="2.5" fill="#6e6e6e"/><rect x="7" y="5" width="3" height="2.5" fill="#6e6e6e"/><rect x="3" y="8.5" width="3" height="2.5" fill="#6e6e6e"/><rect x="7" y="8.5" width="3" height="2.5" fill="#6e6e6e"/></svg>
<div class="t" style="left:522px;top:1003px;font-size:12.2px;line-height:normal;color:#222;font-weight:normal;font-family:'Liberation Sans', sans-serif;letter-spacing:-0.35px;">Java Enterprise</div>
<svg style="left:625px;top:1002px;" width="12" height="14" viewBox="0 0 12 14"><path d="M2 14 V1 M2 1 L0 3 M2 1 L4 3 M2 7 H9 M9 4 V10 M7 5.5 L9 4 L11 5.5" stroke="#6e6e6e" stroke-width="1.3" fill="none"/></svg>
<div class="t" style="left:641px;top:1003px;font-size:12.2px;line-height:normal;color:#222;font-weight:normal;font-family:'Liberation Sans', sans-serif;letter-spacing:-0.35px;"><u>9</u>: Version Control</div>
<svg style="left:760px;top:1004px;" width="12" height="10" viewBox="0 0 12 10"><path d="M0 1 H12 M0 5 H8 M0 9 H12" stroke="#6e6e6e" stroke-width="1.4"/></svg>
<div class="t" style="left:776px;top:1003px;font-size:12.2px;line-height:normal;color:#222;font-weight:normal;font-family:'Liberation Sans', sans-serif;letter-spacing:-0.35px;"><u>0</u>: Messages</div>
<svg style="left:864px;top:1002px;" width="13" height="13" viewBox="0 0 13 13"><path d="M4 1 L1 4 L4 7 M1 4 H8 A4.5 4.5 0 0 1 8 13 H3" fill="none" stroke="#6e6e6e" stroke-width="1.4"/></svg>
<div class="t" style="left:881px;top:1003px;font-size:12.2px;line-height:normal;color:#222;font-weight:normal;font-family:'Liberation Sans', sans-serif;letter-spacing:-0.35px;">Eval Reset</div>
<svg style="left:1819px;top:1002px;" width="13" height="13" viewBox="0 0 13 13"><circle cx="6.5" cy="6.5" r="6.5" fill="#e5a51e"/><text x="6.5" y="10.5" text-anchor="middle" font-family="Liberation Sans" font-size="10" fill="#222">5</text></svg>
<div class="t" style="left:1836px;top:1003px;font-size:12.5px;line-height:normal;color:#222;font-weight:normal;font-family:'Liberation Sans', sans-serif;">Event Log</div>
<svg style="left:7px;top:1023px;" width="13" height="13" viewBox="0 0 13 13"><rect x="3.5" y="0.5" width="9" height="9" fill="none" stroke="#777"/><path d="M1 3 V12 H10" fill="none" stroke="#777"/></svg>
<div class="t" style="left:27px;top:1022px;font-size:13px;line-height:normal;color:#222;font-weight:normal;font-family:'Liberation Sans', sans-serif;">No occurrences found</div>
<div class="t" style="left:1606px;top:1022px;font-size:13px;line-height:normal;color:#222;font-weight:normal;font-family:'Liberation Sans', sans-serif;">48:30</div>
<div class="t" style="left:1649px;top:1022px;font-size:13px;line-height:normal;color:#222;font-weight:normal;font-family:'Liberation Sans', sans-serif;">CRLF</div>
<div class="t" style="left:1689px;top:1022px;font-size:13px;line-height:normal;color:#222;font-weight:normal;font-family:'Liberation Sans', sans-serif;">UTF-8</div>
<div class="t" style="left:1735px;top:1022px;font-size:13px;line-height:normal;color:#222;font-weight:normal;font-family:'Liberation Sans', sans-serif;">4 spaces</div>
<div class="t" style="left:1798px;top:1022px;font-size:13px;line-height:normal;color:#222;font-weight:normal;font-family:'Liberation Sans', sans-serif;">Git: master</div>
<svg style="left:1871px;top:1023px;" width="13" height="13" viewBox="0 0 13 13"><path d="M2 6 V3 A3 3 0 0 1 8 3" fill="none" stroke="#555" stroke-width="1.5"/><rect x="4" y="6" width="9" height="7" fill="#555"/></svg>
<svg style="left:1895px;top:1022px;" width="15" height="15" viewBox="0 0 15 15"><path d="M3 4 H12 L11 1 H4 Z" fill="#555"/><rect x="1" y="4" width="13" height="2" fill="#555"/><circle cx="7.5" cy="9" r="3.5" fill="#777"/><path d="M2 15 Q7.5 10 13 15 Z" fill="#555"/></svg>
<div style="left:384px;top:1040px;width:48px;height:40px;background:#3b4a55;"></div>
<div style="left:192px;top:1078px;width:39px;height:2px;background:#7ab8e8;"></div>
<div style="left:290px;top:1078px;width:37px;height:2px;background:#7ab8e8;"></div>
<div style="left:340px;top:1078px;width:39px;height:2px;background:#7ab8e8;"></div>
<div style="left:384px;top:1078px;width:48px;height:2px;background:#7ab8e8;"></div>
<div style="left:437px;top:1078px;width:40px;height:2px;background:#7ab8e8;"></div>
<div style="left:485px;top:1078px;width:40px;height:2px;background:#7ab8e8;"></div>
<div style="left:535px;top:1078px;width:40px;height:2px;background:#7ab8e8;"></div>
<div style="left:583px;top:1078px;width:40px;height:2px;background:#7ab8e8;"></div>
<div style="left:633px;top:1078px;width:40px;height:2px;background:#7ab8e8;"></div>
<div style="left:683px;top:1078px;width:40px;height:2px;background:#7ab8e8;"></div>
<div style="left:731px;top:1078px;width:40px;height:2px;background:#7ab8e8;"></div>
<svg style="left:14px;top:1051px;" width="18" height="18" viewBox="0 0 18 18"><path d="M0 2.5 L7.5 1.4 V8.5 H0 Z M8.5 1.3 L18 0 V8.5 H8.5 Z M0 9.5 H7.5 V16.6 L0 15.5 Z M8.5 9.5 H18 V18 L8.5 16.7 Z" fill="#fff"/></svg>
<svg style="left:62px;top:1050px;" width="20" height="20" viewBox="0 0 20 20"><circle cx="12" cy="8" r="6" fill="none" stroke="#fff" stroke-width="1.6"/><path d="M7.8 12.2 L1 19" stroke="#fff" stroke-width="1.8"/></svg>
<svg style="left:106px;top:1051px;" width="18" height="18" viewBox="0 0 18 18"><g fill="#fff"><rect x="0" y="0" width="4" height="4"/><rect x="7" y="0" width="4" height="4"/><rect x="14" y="0" width="4" height="4"/><rect x="0" y="7" width="4" height="4"/><rect x="7" y="7" width="4" height="4"/><rect x="14" y="7" width="4" height="4"/><rect x="0" y="14" width="4" height="4"/><rect x="7" y="14" width="4" height="4"/><rect x="14" y="14" width="4" height="4"/></g></svg>
<svg style="left:150px;top:1047px;" width="25" height="25" viewBox="0 0 25 25"><defs><linearGradient id="eg" x1="0" y1="0" x2="1" y2="1"><stop offset="0" stop-color="#50e6a0"/><stop offset="0.5" stop-color="#1fa2e3"/><stop offset="1" stop-color="#0c59a4"/></linearGradient></defs><circle cx="12.5" cy="12.5" r="12" fill="url(#eg)"/><path d="M6 15 Q7 7 14 7 Q20 7 21 12 Q17 9 12 11 Q9 13 12 17 Q16 21 22 18 Q18 24 11 23 Q5 21 6 15 Z" fill="#1f2f3b" opacity="0.35"/></svg>
<svg style="left:199px;top:1048px;" width="25" height="22" viewBox="0 0 25 22"><path d="M0 2 H9 L11 4 H25 V21 H0 Z" fill="#f7c648"/><rect x="0" y="7" width="25" height="14" fill="#ffd866"/><rect x="7" y="13" width="11" height="8" fill="#3e8ed8"/><rect x="9" y="15" width="7" height="6" fill="#ffd866"/></svg>
<svg style="left:248px;top:1046px;" width="24" height="26" viewBox="0 0 24 26"><path d="M8 6 A4 4 0 0 1 16 6" fill="none" stroke="#fff" stroke-width="1.8"/><rect x="1" y="6" width="22" height="19" rx="2" fill="#fff"/><rect x="6" y="10" width="5.5" height="5.5" fill="#f35325"/><rect x="12.5" y="10" width="5.5" height="5.5" fill="#81bc06"/><rect x="6" y="16.5" width="5.5" height="5.5" fill="#05a6f0"/><rect x="12.5" y="16.5" width="5.5" height="5.5" fill="#ffba08"/></svg>
<svg style="left:296px;top:1047px;" width="26" height="24" viewBox="0 0 26 24"><ellipse cx="10" cy="9.5" rx="9.5" ry="8" fill="#3ad44a"/><ellipse cx="17" cy="15.5" rx="8.5" ry="7" fill="#e8e8e8"/><circle cx="7" cy="8" r="1.3" fill="#1f2f3b"/><circle cx="13" cy="8" r="1.3" fill="#1f2f3b"/><circle cx="14.5" cy="14.5" r="1.1" fill="#888"/><circle cx="19.5" cy="14.5" r="1.1" fill="#888"/></svg>
<svg style="left:346px;top:1047px;" width="25" height="25" viewBox="0 0 25 25"><circle cx="12.5" cy="12.5" r="12" fill="#d8d8d8"/><circle cx="12.5" cy="12.5" r="10.8" fill="#2b292c"/><path d="M12.5 4 A4 4 0 1 1 9 10 M6 16 A4 4 0 1 1 13 17.5 M19 16 A4 4 0 0 1 13 8" fill="none" stroke="#d0d0d0" stroke-width="1.8"/></svg>
<svg style="left:395px;top:1047px;" width="25" height="25" viewBox="0 0 25 25"><path d="M2 4 L12 0 L24 6 L22 22 L8 25 L0 14 Z" fill="#e8348b"/><path d="M14 1 L25 4 L24 21 L15 25 Z" fill="#3b65e0"/><rect x="4" y="4" width="17" height="17" fill="#000"/><text x="6.5" y="13" font-family="Liberation Sans" font-weight="bold" font-size="8" fill="#fff">IJ</text><rect x="6.5" y="16" width="6" height="1.5" fill="#fff"/></svg>
<svg style="left:444px;top:1047px;" width="25" height="25" viewBox="0 0 25 25"><path d="M18 0 L25 3 V22 L18 25 L6 14 L2 17 L0 15.5 V9.5 L2 8 L6 11 Z" fill="#2489ca"/><path d="M18 6 L10 12.5 L18 19 Z" fill="#1f2f3b"/><path d="M18 0 L25 3 V22 L18 25 Z" fill="#36a9f0"/></svg>
<svg style="left:493px;top:1047px;" width="25" height="25" viewBox="0 0 25 25"><circle cx="12.5" cy="12.5" r="12" fill="#35a7e0"/><circle cx="10" cy="9" r="3.5" fill="none" stroke="#fff" stroke-width="1.5"/><path d="M4 19 Q5 13 10 13 Q15 13 16 19 Z" fill="none" stroke="#fff" stroke-width="1.5"/><circle cx="15" cy="9" r="3" fill="none" stroke="#fff" stroke-width="1.3"/></svg>
<svg style="left:542px;top:1046px;" width="23" height="27" viewBox="0 0 23 27"><rect x="1" y="3" width="19" height="23" fill="#8fd85e"/><rect x="1" y="3" width="19" height="8" fill="#eef3d8"/><path d="M5 8 V20 M8 12 H14" stroke="#1f2f3b" stroke-width="1.4"/><path d="M21 1 L13 17" stroke="#d8b81a" stroke-width="2.5"/></svg>
<svg style="left:591px;top:1047px;" width="25" height="25" viewBox="0 0 25 25"><rect width="25" height="25" rx="5" fill="#000"/><path d="M5 7 H20 L5 18 H20 Z" fill="none" stroke="#fff" stroke-width="2.2"/></svg>
<svg style="left:640px;top:1047px;" width="24" height="25" viewBox="0 0 24 25"><path d="M12 0 L23 6 V19 L12 25 L1 19 V6 Z" fill="#e54b5b"/><circle cx="12" cy="13" r="6" fill="#fff"/><path d="M7 9 Q12 16 17 9 Q15 6 12 8 Q9 6 7 9 Z" fill="#e54b5b"/></svg>
<svg style="left:689px;top:1047px;" width="25" height="25" viewBox="0 0 25 25"><path d="M4 14 Q2 4 10 2 Q14 6 12 13" fill="none" stroke="#2d7dd2" stroke-width="2.2"/><path d="M11 4 Q19 1 22 9 Q24 18 16 22" fill="none" stroke="#e3c12e" stroke-width="2.2"/><path d="M4 16 Q6 24 14 23 Q19 20 16 15 Q11 13 9 18" fill="none" stroke="#3ea353" stroke-width="2.2"/></svg>
<svg style="left:738px;top:1047px;" width="25" height="25" viewBox="0 0 25 25"><circle cx="12.5" cy="12.5" r="12" fill="#db4437"/><path d="M12.5 12.5 L2 18.5 A12 12 0 0 0 16 24.5 Z" fill="#0f9d58"/><path d="M12.5 12.5 L16 24.5 A12 12 0 0 0 23.5 7 Z" fill="#ffcd40"/><path d="M12.5 12.5 L23.5 7 H12.5 Z" fill="#ffcd40"/><circle cx="12.5" cy="12.5" r="5.5" fill="#fff"/><circle cx="12.5" cy="12.5" r="4.3" fill="#4285f4"/></svg>
<svg style="left:1596px;top:1054px;" width="14" height="9" viewBox="0 0 14 9"><path d="M1 8 L7 2 L13 8" fill="none" stroke="#fff" stroke-width="1.5"/></svg>
<svg style="left:1621px;top:1049px;" width="12" height="20" viewBox="0 0 12 20"><rect x="3" y="0" width="6" height="12" rx="3" fill="#fff"/><path d="M1 9 Q1 15 6 15 Q11 15 11 9 M6 15 V19 M3 19 H9" stroke="#fff" stroke-width="1.3" fill="none"/></svg>
<svg style="left:1642px;top:1049px;" width="20" height="20" viewBox="0 0 20 20"><rect x="1" y="2" width="16" height="13" fill="none" stroke="#fff" stroke-width="1.4"/><path d="M5 11 L9 6 L13 9" stroke="#fff" stroke-width="1.3" fill="none"/><circle cx="15" cy="15" r="3" fill="#e53935"/></svg>
<svg style="left:1666px;top:1048px;" width="20" height="22" viewBox="0 0 20 22"><ellipse cx="9" cy="9" rx="6" ry="7.5" fill="#111"/><ellipse cx="9" cy="12" rx="4" ry="5" fill="#fff"/><path d="M3 15 H15 L13 18 H5 Z" fill="#e53935"/><path d="M2 17 Q9 22 16 17" fill="#f5b400"/><rect x="12" y="12" width="8" height="8" fill="#f5b400"/></svg>
<svg style="left:1690px;top:1050px;" width="22" height="18" viewBox="0 0 22 18"><path d="M1 6 H5 L10 1 V17 L5 12 H1 Z" fill="none" stroke="#fff" stroke-width="1.3"/><path d="M13 6 Q15 9 13 12 M16 4 Q19 9 16 14" fill="none" stroke="#fff" stroke-width="1.3"/></svg>
<svg style="left:1715px;top:1050px;" width="20" height="18" viewBox="0 0 20 18"><path d="M2 16 Q4 6 16 4 M5 16 Q7 9 16 8 M8 16 Q10 12 16 12" fill="none" stroke="#fff" stroke-width="1.3"/></svg>
<svg style="left:1737px;top:1049px;" width="20" height="20" viewBox="0 0 20 20"><path d="M1 4 H19 M6 1 V7 M14 1 V7 M3 8 H17 V13 H3 Z M10 6 V14 M1 14 H19 M10 14 L2 19 M10 14 L18 19" fill="none" stroke="#fff" stroke-width="1.5"/></svg>
<svg style="left:1767px;top:1049px;" width="20" height="20" viewBox="0 0 20 20"><rect x="1" y="1" width="18" height="18" fill="none" stroke="#fff" stroke-width="1.4"/><path d="M4 5 H16 M10 5 V15 M5 10 H15 V15 M3 15 H17" fill="none" stroke="#fff" stroke-width="1.4"/></svg>
<div class="t" style="left:1816px;top:1043px;font-size:13px;line-height:normal;color:#fff;font-weight:normal;font-family:'Liberation Sans', sans-serif;">7:14</div>
<div class="t" style="left:1797px;top:1061px;font-size:13px;line-height:normal;color:#fff;font-weight:normal;font-family:'Liberation Sans', sans-serif;">2022/10/23</div>
<svg style="left:1876px;top:1048px;" width="24" height="24" viewBox="0 0 24 24"><path d="M1 1 H21 V15 H8 L3 19 V15 H1 Z" fill="none" stroke="#fff" stroke-width="1.5"/><path d="M5 5 H17 M5 9 H14" stroke="#fff" stroke-width="1.3"/><circle cx="17" cy="17" r="6" fill="#1f2f3b" stroke="#fff" stroke-width="1.2"/><text x="17" y="21" text-anchor="middle" font-family="Liberation Sans" font-size="10" fill="#fff">1</text></svg>
<svg style="left:1798px;top:618px;" width="122" height="64" viewBox="0 0 122 64"><defs><filter id="sh" x="-20%" y="-20%" width="140%" height="140%"><feDropShadow dx="0" dy="1" stdDeviation="1.5" flood-color="#000" flood-opacity="0.35"/></filter></defs><g filter="url(#sh)"><rect x="2" y="8" width="100" height="42" rx="21" fill="#2e3139"/><circle cx="91" cy="29" r="29.5" fill="#4a4d55"/></g><circle cx="91" cy="29" r="26" fill="none" stroke="#3a3d44" stroke-width="2"/><path d="M91 5 A24 24 0 0 1 108 46" fill="none" stroke="#4fd1b5" stroke-width="2"/><path d="M108 46 A24 24 0 0 1 70 40" fill="none" stroke="#e5dd6a" stroke-width="2"/><path d="M70 40 A24 24 0 0 1 74 12" fill="none" stroke="#e56f6f" stroke-width="2" opacity="0.9"/><path d="M2 29 H66" stroke="#24272d" stroke-width="1"/><text x="76" y="37" font-family="Liberation Sans" font-size="22" fill="#f0f0f0">84</text><text x="104" y="38" font-family="Liberation Sans" font-size="11" fill="#f0f0f0">%</text><path d="M18 22 V15 M15 18 L18 14.5 L21 18" stroke="#56b0e8" stroke-width="1.6" fill="none"/><path d="M18 36 V43 M15 40 L18 43.5 L21 40" stroke="#43c24a" stroke-width="1.6" fill="none"/><text x="27" y="23" font-family="Liberation Sans" font-size="12" fill="#eee">1.4</text><text x="44" y="23" font-family="Liberation Sans" font-size="9" fill="#bbb">K/s</text><text x="35" y="44" font-family="Liberation Sans" font-size="12" fill="#eee">0</text><text x="43" y="44" font-family="Liberation Sans" font-size="9" fill="#bbb">K/s</text></svg>
<svg style="left:1853px;top:668px;" width="14" height="14" viewBox="0 0 14 14"><circle cx="7" cy="7" r="3.5" fill="none" stroke="#888" stroke-width="2.5"/><path d="M7 0 V14 M0 7 H14 M2 2 L12 12 M12 2 L2 12" stroke="#888" stroke-width="2"/><circle cx="7" cy="7" r="2" fill="#f5f5f6"/></svg>
<div style="left:1626px;top:0px;width:283px;height:3px;background:linear-gradient(#9a9a9a,rgba(200,200,200,0));border-radius:0 0 4px 4px;"></div>
</body></html>
